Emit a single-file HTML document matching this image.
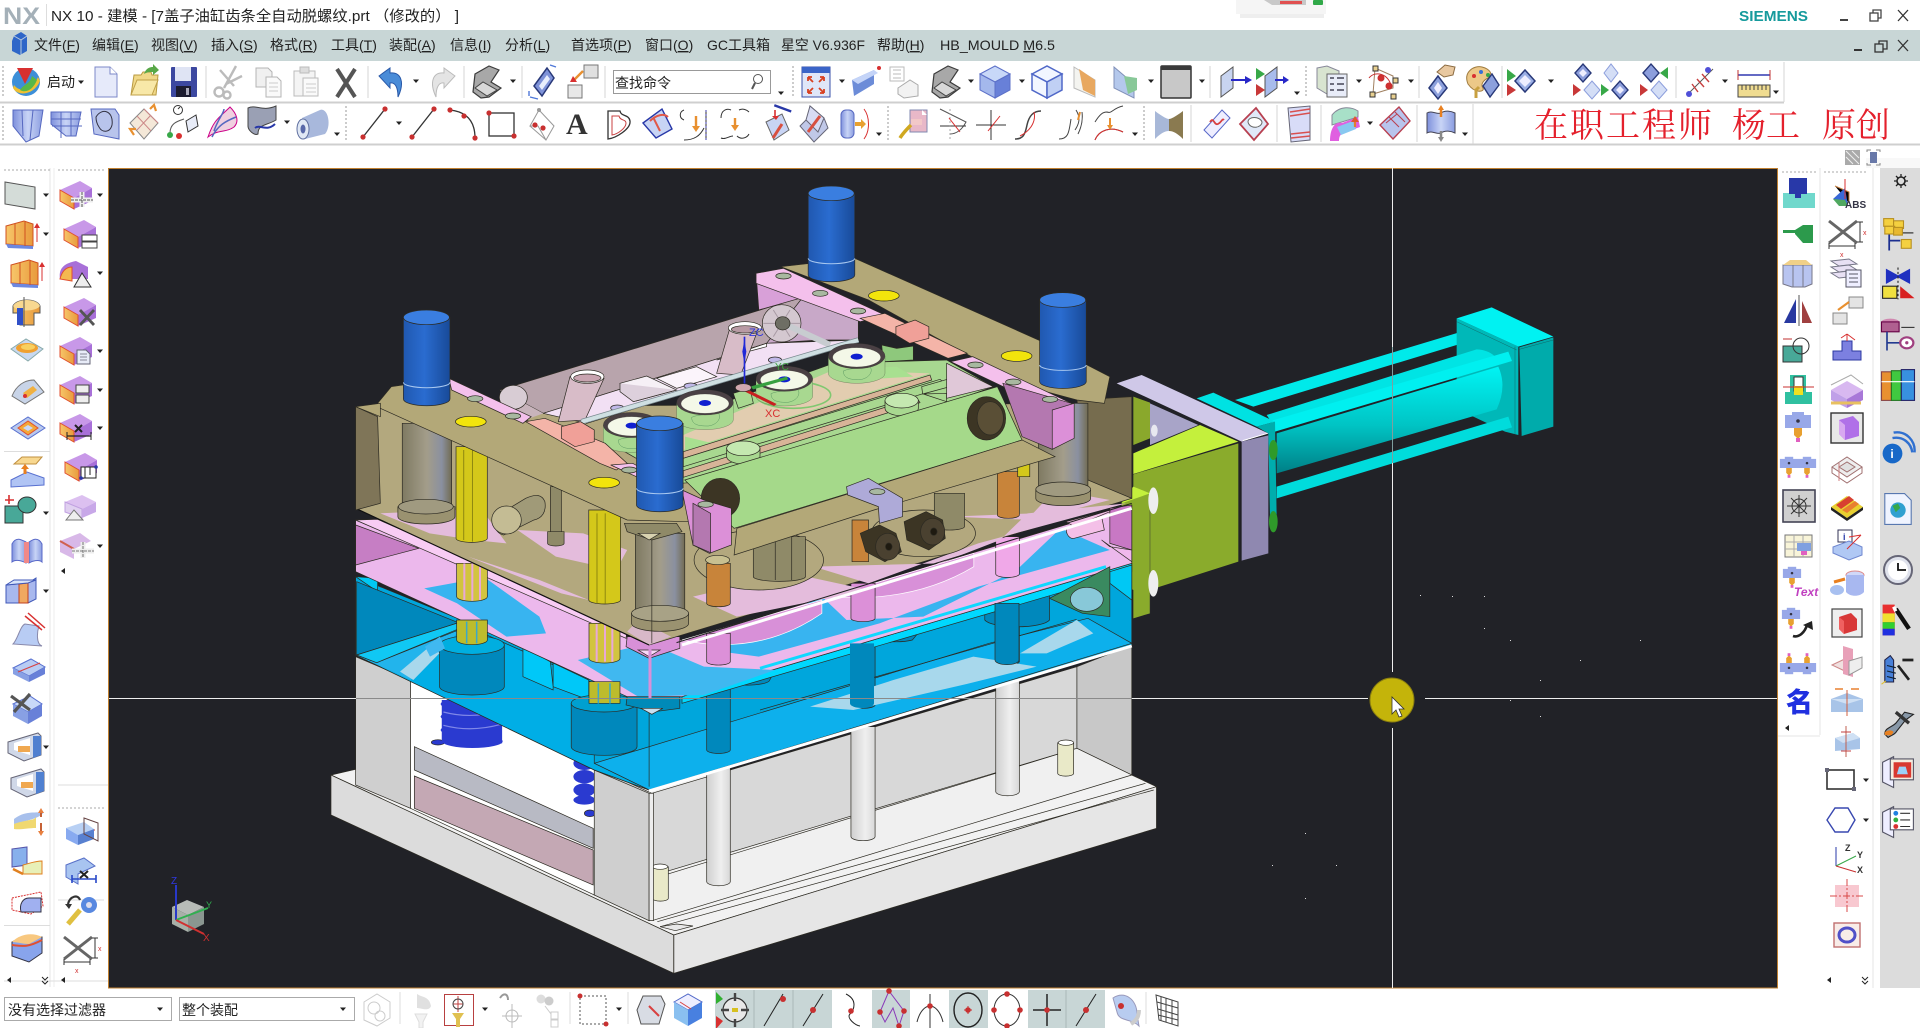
<!DOCTYPE html>
<html><head><meta charset="utf-8"><title>NX 10</title>
<style>
html,body{margin:0;padding:0;background:#fff;overflow:hidden}
svg{display:block}
text{font-family:"Liberation Sans","Noto Sans CJK SC",sans-serif;fill:#222}
.o *{vector-effect:non-scaling-stroke;stroke:#2c2a22;stroke-width:.7}
.n *{stroke:none}
.sep{stroke:#d4d4d4;stroke-width:1}
</style></head><body>
<svg width="1920" height="1028" viewBox="0 0 1920 1028" xmlns="http://www.w3.org/2000/svg">
<defs>
<linearGradient id="gP" x1="0" x2="1" y1="0" y2="0"><stop offset="0" stop-color="#2058b0"/><stop offset=".45" stop-color="#2a6cd0"/><stop offset="1" stop-color="#184a98"/></linearGradient>
<linearGradient id="gC" x1="0" x2="0" y1="0" y2="1"><stop offset="0" stop-color="#00f4f4"/><stop offset=".55" stop-color="#00c4c4"/><stop offset="1" stop-color="#007f86"/></linearGradient>
<linearGradient id="gPin" x1="0" x2="1" y1="0" y2="0"><stop offset="0" stop-color="#cfcfcf"/><stop offset=".6" stop-color="#efefef"/><stop offset="1" stop-color="#d8d8d8"/></linearGradient>
<linearGradient id="gCol" x1="0" x2="1" y1="0" y2="0"><stop offset="0" stop-color="#7f7a62"/><stop offset=".5" stop-color="#a39d8a"/><stop offset=".8" stop-color="#8a90a0"/><stop offset="1" stop-color="#726c52"/></linearGradient>
<linearGradient id="gOr" x1="0" x2="1" y1="0" y2="0"><stop offset="0" stop-color="#f7c66a"/><stop offset="1" stop-color="#e89a3c"/></linearGradient>
<linearGradient id="gBl" x1="0" x2="1" y1="0" y2="1"><stop offset="0" stop-color="#dfe8fc"/><stop offset="1" stop-color="#6f86dc"/></linearGradient>
<linearGradient id="gSurf" x1="0" x2="1" y1="0" y2="0"><stop offset="0" stop-color="#7e90dc"/><stop offset=".5" stop-color="#c8d4f6"/><stop offset="1" stop-color="#8a9ce0"/></linearGradient>

<path id="dd" d="M-3,-1.5h6l-3,3.5z" fill="#222"/>
<path id="tri" d="M2,-3v6l-4,-3z" fill="#222"/>

<!-- toolbar -->
<g id="start"><circle r="14" cx="-1" fill="#3d8fd8"/><path d="M-13,3c6,8 18,6 24,-8l2,4c-6,14 -22,16 -27,7z" fill="#f0c030"/><path d="M-10,-14h16l-8,16z" fill="#d83030"/><path d="M-7,8c4,-6 10,-6 12,-14l5,4c-3,8 -10,14 -17,10z" fill="#58b848"/></g>
<g id="doc"><path d="M-11,-15h15l7,7v23h-22z" fill="#e6eafa" stroke="#7c88c8"/><path d="M4,-15v7h7" fill="#fff" stroke="#7c88c8"/></g>
<g id="fold"><path d="M-13,13l3,-20h7l2,-3h8l1,3h6l-2,20z" fill="#f0d888" stroke="#b89a40"/><path d="M-13,13l6,-15h21l-6,15z" fill="#f8e8a8" stroke="#c0a048"/><path d="M0,-8c2,-6 6,-7 9,-7v-3l6,6l-6,5v-3c-3,0 -6,0 -9,2z" fill="#58a848"/></g>
<g id="flop"><rect x="-13" y="-15" width="26" height="30" rx="1" fill="#3c48a0"/><rect x="-9" y="-15" width="16" height="14" fill="#dfe4f4"/><rect x="-8" y="4" width="15" height="11" fill="#1c1c30"/><rect x="2" y="6" width="3" height="7" fill="#aab"/></g>
<g id="sc" fill="none" stroke="#bbb" stroke-width="2.4"><path d="M8,-16L-4,6M-8,-12L6,4M14,-6L-2,2"/><circle cx="-9" cy="10" r="4.5"/><circle cx="-1" cy="13" r="3.5"/></g>
<g id="cp" fill="#f0f0f0" stroke="#b4b4b4"><path d="M-12,-14h12l4,4v15h-16z"/><path d="M-2,-5h11l4,4v16h-15z" fill="#fafafa"/><path d="M1,1h9M1,5h9M1,9h9" stroke="#ccc"/></g>
<g id="pt" fill="#f4f4f4" stroke="#bbb"><rect x="-13" y="-11" width="21" height="25"/><rect x="-7" y="-15" width="9" height="6" fill="#ddd"/><path d="M-4,-4h15v18h-15z" fill="#fafafa"/><path d="M-1,2h10M-1,6h10M-1,10h10" stroke="#ccc"/></g>
<path id="xx" d="M-9,-14L9,14M9,-14L-9,14" stroke="#555" stroke-width="4"/>
<g id="undo"><path d="M-13,-6L-2,-14v5c11,-1 15,9 8,24c0,-10 -3,-15 -8,-14v5z" fill="#4a8cd8" stroke="#2858a8"/></g>
<g id="redo"><path d="M13,-6L2,-14v5c-11,-1 -15,9 -8,24c0,-10 3,-15 8,-14v5z" fill="#e4e4e4" stroke="#bbb"/></g>
<g id="wed"><path d="M-14,10L-12,-8L2,-16L12,-12L4,0L14,6L2,15L-6,16z" fill="#a8a8a8" stroke="#3c3c3c" stroke-width="1.2"/><path d="M-12,6L-4,0L10,8L0,14z" fill="#d8d8d8" stroke="#444"/></g>
<g id="dia"><path d="M-10,4L3,-14L10,-4L-2,14z" fill="#7e92d8" stroke="#283878" stroke-width="1.5"/><path d="M-5,4L3,-7L6,-3L-2,8z" fill="#e8eefc"/><path d="M-14,15l8,2M12,-15l-6,-2M-15,9v5" stroke="#4f78d8" stroke-width="1.4"/></g>
<g id="win2"><rect x="2" y="-17" width="14" height="13" fill="#e0e0e0" stroke="#777"/><rect x="-14" y="3" width="14" height="13" fill="#e8e8e8" stroke="#777"/><path d="M-9,-1L1,-11" stroke="#e89030" stroke-width="2.4"/><path d="M-12,0l7,0l-4,-6z" fill="#d83030"/></g>
<g id="fit"><rect x="-14" y="-15" width="28" height="30" fill="#dfe6f8" stroke="#3850a8"/><rect x="-14" y="-15" width="28" height="6" fill="#3a64c8"/><path d="M-8,-5l5,5M-8,-5h4M-8,-5v4M8,-5l-5,5M8,-5h-4M8,-5v4M-8,11l5,-5M-8,11h4M-8,11v-4M8,11l-5,-5M8,11h-4M8,11v-4" stroke="#d84020" stroke-width="1.8" fill="none"/></g>
<g id="ext"><path d="M-14,-2L8,-12v14L-12,14z" fill="#6c8cd8"/><path d="M-14,-2L8,-12l4,3L-8,2z" fill="#c4d4f8"/><circle cx="13" cy="-14" r="2" fill="#d83030"/></g>
<g id="lsb"><rect x="-14" y="-15" width="14" height="14" fill="#fff" stroke="#bbb"/><path d="M-11,-12h8M-11,-8h8M-11,-4h8" stroke="#bbb"/><path d="M-6,6L6,-2L14,3v11L0,16L-6,12z" fill="#f2f2f2" stroke="#aaa"/></g>
<g id="box"><path d="M-15,-8L0,-16L15,-8L0,0z" fill="#c8d8f8" stroke="#5c70c8"/><path d="M-15,-8L0,0V16L-15,8z" fill="#a4b8ec" stroke="#5c70c8"/><path d="M15,-8L0,0V16L15,8z" fill="#6880d8" stroke="#5c70c8"/></g>
<g id="wire" fill="#f2f6ff" stroke="#5068c8" stroke-width="1.5"><path d="M-15,-8L0,-16L15,-8L0,0z"/><path d="M-15,-8L0,0V16L-15,8z"/><path d="M15,-8L0,0V16L15,8z" fill="#c0d0f4"/></g>
<g id="ora"><path d="M-11,-15L10,-2V15L-11,6z" fill="#f4f4f0" stroke="#bbb"/><path d="M-6,-13L10,-2V14L-2,8z" fill="#e8a860"/></g>
<g id="grn"><path d="M-10,-15L10,2V16L-10,6z" fill="#b4c8ec" stroke="#8090b8"/><path d="M0,-6L13,-4V8L4,12z" fill="#88c898"/></g>
<g id="dkr"><rect x="-15" y="-16" width="30" height="32" rx="1" fill="#c8c8c8" stroke="#333" stroke-width="1.5"/><rect x="-15" y="-16" width="30" height="4" fill="#3a3a3a"/></g>
<g id="mov"><path d="M-14,-6L-2,-15V6L-14,15z" fill="#c8d4f0" stroke="#555"/><path d="M-4,-2H11" stroke="#2828c8" stroke-width="2"/><path d="M10,-6l7,4l-7,4z" fill="#2828c8"/></g>
<g id="mov2"><path d="M-7,-6L5,-15V6L-7,15z" fill="#a8bcec" stroke="#555"/><path d="M-16,-14l9,6l-9,6z" fill="#38a848"/><path d="M-16,2l9,6l-9,6z" fill="#c83838"/><path d="M3,-2H12" stroke="#2828c8" stroke-width="2"/><path d="M11,-6l6,4l-6,4z" fill="#2828c8"/></g>
<g id="lst"><path d="M-16,-14l10,-2l12,5v24l-12,-1l-10,-6z" fill="#d8e4d0" stroke="#889"/><rect x="-6" y="-8" width="20" height="23" fill="#e8ecf8" stroke="#666"/><path d="M-3,-4h4M4,-4h7M-3,2h4M4,2h7M-3,8h4M4,8h7" stroke="#445" stroke-width="1.4"/></g>
<g id="net" fill="none" stroke="#c83030"><path d="M-8,-14L-10,12L10,6L10,-6z" stroke="#a08060"/><circle cx="-2" cy="-4" r="3" fill="#d03030"/><circle cx="6" cy="4" r="3" fill="#d03030"/><path d="M-14,-4c6,-8 20,-4 22,8"/><rect x="-10" y="-16" width="5" height="5" fill="#e8d090" stroke="#333"/><rect x="10" y="-4" width="5" height="5" fill="#e8d090" stroke="#333"/><rect x="-13" y="10" width="5" height="5" fill="#e8d090" stroke="#333"/><rect x="8" y="12" width="5" height="5" fill="#e8d090" stroke="#333"/></g>
<g id="hand"><path d="M-4,-10l8,-7l10,2l-2,8l-9,2z" fill="#e8c8a0" stroke="#8a6a40"/><path d="M-12,6L-3,-6L6,6L-3,17z" fill="#8ca0dc" stroke="#283878" stroke-width="1.5"/><path d="M-7,6L-3,0L1,6L-3,12z" fill="#eef"/></g>
<g id="pal"><path d="M-12,2c-5,-12 6,-19 14,-17c8,2 12,8 6,11c-4,2 -8,6 -5,10c2,4 -8,6 -15,-4z" fill="#ecc888" stroke="#a07c40"/><circle cx="-6" cy="-6" r="2" fill="#d83030"/><circle cx="1" cy="-10" r="2" fill="#3870d8"/><circle cx="8" cy="-7" r="2" fill="#38a848"/><path d="M3,4L12,-8L19,3L10,15z" fill="#8ca0dc" stroke="#283878" stroke-width="1.4"/><path d="M-4,16v-8l3,-3" stroke="#c8a040" stroke-width="3" fill="none"/></g>
<g id="d1"><path d="M-8,0L2,-11L12,0L2,11z" fill="#9aaee4" stroke="#283878" stroke-width="1.5"/><path d="M-4,0L2,-6L8,0L2,6z" fill="#eef"/><path d="M-16,-12l9,7l-9,6z" fill="#38a848"/><path d="M-16,3l9,6l-9,6z" fill="#c83838"/></g>
<g id="d2"><path d="M-10,-9L-2,-18L6,-9L-2,0z" fill="#8c9edc" stroke="#283878" stroke-width="1.4"/><path d="M-6,-9L-2,-13L2,-9L-2,-5z" fill="#eef"/><path d="M-1,8L7,-1L15,8L7,17z" fill="#d4def6" stroke="#8c9edc"/><path d="M-12,2l8,6l-8,6z" fill="#c83838"/></g>
<g id="d3"><path d="M-9,-9L-2,-18L5,-9L-2,0z" fill="#d4def6" stroke="#8c9edc"/><path d="M-1,8L7,-1L15,8L7,17z" fill="#8c9edc" stroke="#283878" stroke-width="1.4"/><path d="M3,8L7,4L11,8L7,12z" fill="#eef"/><path d="M-12,2l8,6l-8,6z" fill="#38a848"/></g>
<g id="d4"><path d="M-11,-9L-3,-18L5,-9L-3,0z" fill="#8c9edc" stroke="#283878" stroke-width="1.4"/><path d="M-3,8L5,-1L13,8L5,17z" fill="#d4def6" stroke="#8c9edc"/><path d="M14,-15l-8,6l8,6z" fill="#38a848"/><path d="M-14,2l8,6l-8,6z" fill="#c83838"/></g>
<g id="chain"><path d="M-13,13L13,-13" stroke="#555"/><path d="M-8,2L-2,10M-3,-3L4,5M2,-8L9,0" stroke="#c84040" stroke-width="1.4"/><circle cx="-11" cy="12" r="3" fill="#5050d8"/><circle cx="8" cy="-12" r="3" fill="#5050d8"/></g>
<g id="rul"><path d="M-16,-9h32" stroke="#3038b0" stroke-width="1.5"/><path d="M-16,-14v10M16,-14v10" stroke="#c03030"/><rect x="-16" y="1" width="32" height="12" fill="#f0dc90" stroke="#444"/><path d="M-12,1v5M-8,1v5M-4,1v5M0,1v5M4,1v5M8,1v5M12,1v5" stroke="#444"/></g>

<!-- row 2 surfaces -->
<g id="s1"><path d="M-15,-12h30l-4,26l-13,6L-15,4z" fill="url(#gSurf)" stroke="#5668c0"/><path d="M-6,-12l1,26M5,-12l-3,30" stroke="#5668c0"/></g>
<g id="s2"><path d="M-15,-10h30l-5,24h-10L-15,2z" fill="url(#gSurf)" stroke="#5668c0"/><path d="M-5,-10v26M5,-10v24M-15,-3h30M-14,4h30" stroke="#5668c0"/></g>
<g id="s3"><path d="M-14,-14l24,0l4,6v24L-11,11z" fill="#b8c4ec" stroke="#5668c0"/><path d="M-9,-6c6,-10 18,-6 16,8c-2,8 -10,8 -13,2c-2,-3 -3,-6 -3,-10z" fill="none" stroke="#334"/></g>
<g id="s4"><path d="M-14,0L0,-14L14,0L0,16z" fill="#f4e8d8" stroke="#888"/><path d="M-7,-7L7,8M0,-14L14,0M-7,7L7,-8" stroke="#c88"/><path d="M-10,12l-4,-6h6M6,-14l4,-4l2,6" stroke="#e89030" stroke-width="2.2" fill="none"/></g>
<g id="s5"><circle cx="-4" cy="-13" r="4.5" fill="#fff" stroke="#333"/><path d="M-4,-14l2,-2" stroke="#333"/><path d="M-12,10c0,-10 8,-12 14,-14" fill="none" stroke="#555"/><path d="M4,-2L14,-8L16,3L6,9z" fill="#e8ecf8" stroke="#333"/><circle cx="-12" cy="12" r="3" fill="#38a848"/><circle cx="-3" cy="13" r="3" fill="#d83030"/></g>
<g id="s6"><path d="M-14,14C-8,-4 -2,-6 8,-16c6,6 10,14 4,20C4,10 -4,6 -14,14z" fill="#f0d0e0" stroke="#c08"/><path d="M-10,14C-4,2 4,-2 14,-6M-8,8C-4,-4 2,-10 2,-14" fill="none" stroke="#5668c0" stroke-width="1.5"/></g>
<g id="s7"><path d="M-15,-14c8,-4 14,4 28,-2v14c-10,6 -18,4 -18,14c-4,2 -10,-4 -10,-8z" fill="#9aa0b4" stroke="#444"/><path d="M-8,6c5,-4 12,4 20,-4" fill="none" stroke="#2838a8" stroke-width="2"/></g>
<g id="tube"><path d="M-10,-6L8,-14a7,13 0 0 1 5,24L-7,15z" fill="#a8b8dc"/><ellipse cx="-9" cy="5" rx="6" ry="10" fill="#e0e8f4" stroke="#6070a0"/><ellipse cx="-9" cy="5" rx="2.5" ry="4.5" fill="#5868a8"/></g>
<g id="ln"><path d="M-12,13L10,-15" stroke="#333" stroke-width="1.3"/><circle cx="-12" cy="13" r="2.6" fill="#c83030"/><circle cx="10" cy="-15" r="2.6" fill="#c83030"/></g>
<g id="arc"><path d="M-13,-14C6,-12 12,0 12,14" stroke="#333" stroke-width="1.3" fill="none"/><circle cx="-13" cy="-14" r="2.6" fill="#c83030"/><circle cx="1" cy="-8" r="2.6" fill="#c83030"/><circle cx="12" cy="14" r="2.6" fill="#c83030"/></g>
<g id="rct"><rect x="-13" y="-11" width="25" height="23" fill="none" stroke="#333" stroke-width="1.3"/><circle cx="-13" cy="-11" r="2.6" fill="#c83030"/><circle cx="12" cy="12" r="2.6" fill="#c83030"/></g>
<g id="pts"><path d="M-3,-14L-12,2L-4,2L4,16L12,2L-3,-14M-12,2L4,16" stroke="#999" fill="none"/><circle cx="-3" cy="-14" r="2" fill="#999"/><circle cx="-7" cy="1" r="2.6" fill="#c83030"/><circle cx="1" cy="4" r="2.6" fill="#c83030"/></g>
<g id="shp"><path d="M-10,-13h12c1,6 9,3 10,10c1,8 -14,17 -22,18z" fill="#fff" stroke="#333" stroke-width="1.3"/><path d="M-6,-8h7c1,5 7,3 7,7c0,5 -8,11 -14,12z" fill="none" stroke="#c84040"/></g>
<g id="off"><path d="M-15,0L4,-14L14,6L-2,15z" fill="#c8d4f4" stroke="#2838a8" stroke-width="1.4"/><path d="M-8,-2C-2,-8 6,-10 10,-6M-4,-4l6,12" stroke="#e05848" stroke-width="2" fill="none"/></g>
<g id="cr1"><path d="M-12,-14c-5,2 -5,8 0,10M-12,16c10,0 16,-4 20,-12M10,-14v30" fill="none" stroke="#333"/><path d="M10,-14v30" stroke="#3838a8" stroke-dasharray="2 2"/><path d="M0,-8v10" stroke="#e89030" stroke-width="2.4"/><path d="M-4,2h8l-4,6z" fill="#e89030"/></g>
<g id="cr2"><path d="M-14,-6c0,-8 6,-10 10,-8M4,-14c4,-2 8,0 10,2M-14,14c4,2 8,-2 12,-2M2,12c4,4 10,2 12,-2" fill="none" stroke="#333"/><path d="M0,-6v8" stroke="#e89030" stroke-width="2.4"/><path d="M-4,1h8l-4,6z" fill="#e89030"/></g>
<g id="prj"><path d="M-10,-2L6,-10L13,6L-2,16z" fill="#c8d4f4" stroke="#666"/><path d="M-8,-17h18" stroke="#2838a8" stroke-width="2.4" transform="rotate(20)"/><path d="M-1,-14v6" stroke="#d83030" stroke-width="1.6"/><path d="M-4,-8h7l-3,4z" fill="#d83030"/><path d="M-3,14L6,0" stroke="#d85040" stroke-width="3"/></g>
<g id="prj2"><path d="M-4,-18L10,-6L14,4L0,18L-14,2L-6,-6z" fill="#c0c8e8" stroke="#667"/><path d="M-4,-18L10,-6L4,8L-8,-4z" fill="#d8dcf4" stroke="#667"/><path d="M-6,8L6,-8" stroke="#d85040" stroke-width="3"/></g>
<g id="ext2"><rect x="-13" y="-14" width="13" height="28" rx="5" fill="url(#gSurf)" stroke="#5668c0"/><path d="M10,-15c6,8 6,22 0,30" fill="none" stroke="#d83030"/><path d="M1,-2h6v-3l5,5l-5,5v-3h-6z" fill="#e8a030"/></g>
<g id="key"><rect x="-4" y="-14" width="17" height="22" fill="#e8b8c8" stroke="#8088b0"/><path d="M8,-14l5,5h-5z" fill="#fff"/><rect x="-3" y="-5" width="11" height="6" fill="#f2c8c8"/><path d="M-14,14c3,-5 7,-9 11,-13" stroke="#d0a820" stroke-width="3.5"/></g>
<g id="trm"><path d="M-12,-15L14,-2c-4,8 -10,12 -16,12" stroke="#555" fill="none"/><path d="M-12,2H14" stroke="#333"/><path d="M-2,-15v30" stroke="#aaa" stroke-dasharray="2 2"/><path d="M-3,-6L8,8" stroke="#d83030"/></g>
<g id="trm2"><path d="M-15,1h30M0,-14v30" stroke="#333"/><path d="M-3,7L9,-8" stroke="#d83030"/></g>
<g id="s_c"><path d="M-15,15c8,0 10,-4 12,-14c2,-9 6,-14 14,-14" fill="none" stroke="#444" stroke-width="1.5"/><path d="M-10,12C2,6 6,-4 4,-12" stroke="#d83030" fill="none"/></g>
<g id="s_d"><path d="M-14,15c10,0 10,-8 12,-20M3,-14c5,8 3,14 -1,20M9,-12c1,8 -1,16 -4,22" fill="none" stroke="#444"/><path d="M7,-12l-2,8" stroke="#e89030" stroke-width="2"/></g>
<g id="s_e"><path d="M-15,-2c5,-8 8,-10 12,-10c5,2 6,-4 16,-6M-15,16c4,-10 16,-14 28,-8" fill="none" stroke="#444"/><path d="M-15,16c4,-10 16,-14 28,-8" fill="none" stroke="#d83030"/><path d="M0,-6v8" stroke="#e89030" stroke-width="2"/><path d="M-3,1h6l-3,5z" fill="#e89030"/></g>
<g id="bow"><path d="M-14,-12c8,6 12,8 14,8l0,12c-4,0 -8,2 -14,8z" fill="#a8b8d8"/><path d="M14,-12c-8,6 -12,8 -14,8v12c4,0 8,2 14,8z" fill="#8a7a50"/></g>
<g id="wave"><path d="M-12,6L6,-14L14,-6L-4,14z" fill="#eef" stroke="#5868c8"/><path d="M-6,-2c4,-6 4,4 8,2s4,-6 6,-4" fill="none" stroke="#d84040" stroke-width="1.8"/></g>
<g id="sq"><path d="M-14,0L2,-16L14,0L0,16z" fill="#e0e8f8" stroke="#b84050" stroke-width="1.8"/><path d="M-6,-2c0,-6 12,-6 14,0c0,6 -12,8 -14,0z" fill="#fff" stroke="#666"/></g>
<g id="fold3"><path d="M-11,-16L11,-18V16L-8,18z" fill="#d8dcf8" stroke="#667"/><path d="M-9,-12L11,-15M-9,-8L11,-11M-8,10L11,8M-8,14L11,12" stroke="#d85050" stroke-width="1.6"/></g>
<g id="rb"><path d="M-13,-8c8,-10 20,-8 26,-4v6L-13,2z" fill="#a8e0c8" stroke="#889"/><path d="M-15,18c0,-14 6,-20 12,-18l16,-6l2,10L-2,10c-4,2 -4,6 -4,8z" fill="#e060e0"/><path d="M-8,4L8,-2l3,8L-4,12z" fill="#88c8f0"/><path d="M10,4v-6" stroke="#e08030" stroke-width="2.2"/><path d="M6,-1h8l-4,-6z" fill="#e05830"/></g>
<g id="sq2"><path d="M-15,2L4,-16L15,-2L-2,16z" fill="#b8c4ec" stroke="#b84050" stroke-width="1.4"/><path d="M-6,-6L4,4M0,-11L10,-1M-9,0l11,-9" stroke="#b84050"/></g>
<g id="twin"><path d="M-14,-10c5,-3 10,2 14,0c4,-3 10,-2 14,0v20c-4,-2 -10,-3 -14,0c-4,2 -9,-3 -14,0z" fill="url(#gSurf)" stroke="#445"/><path d="M0,-6v-8" stroke="#e88020" stroke-width="2.5"/><path d="M-3,-13h6l-3,-5z" fill="#e88020"/><path d="M0,8v8" stroke="#888" stroke-width="2.5"/><path d="M-3,14h6l-3,5z" fill="#888"/></g>

<!-- bottom -->
<g id="b_wr" fill="none" stroke="#ccc"><path d="M-13,10V-8L0,-16L13,-8V8L0,16z"/><circle cx="-3" cy="-2" r="6"/><circle cx="3" cy="6" r="5"/></g>
<g id="b_fn"><path d="M-6,-16c6,4 12,2 14,12c-2,6 -10,2 -14,2" fill="#e0e0e0"/><path d="M-8,4h12l-4,8v6h-4v-6z" fill="#f2f2f2" stroke="#ddd"/></g>
<g id="b_fy"><path d="M-5,-6h10M0,-14V2" stroke="#c04040"/><circle cy="-6" r="5" fill="none" stroke="#444"/><path d="M-6,3h12l-4,6v8h-4v-8z" fill="#e0c050"/></g>
<g id="b_cr" fill="none" stroke="#bbb"><circle cx="2" cy="6" r="6"/><path d="M-8,6h20M2,-6v24"/><path d="M-10,-12c4,-6 8,-4 8,2" stroke="#999" stroke-width="2"/></g>
<g id="b_bn"><circle cx="-6" cy="-11" r="4.5" fill="#ddd"/><circle cx="2" cy="-9" r="4.5" fill="#ccc"/><rect x="4" y="2" width="7" height="7" fill="none" stroke="#ccc"/><rect x="4" y="10" width="7" height="7" fill="none" stroke="#ccc"/><path d="M-2,-4L4,4" stroke="#ccc"/></g>
<g id="b_ds"><rect x="-13" y="-14" width="26" height="28" fill="none" stroke="#555" stroke-dasharray="2 2"/><circle cx="-13" cy="-14" r="2.5" fill="#c83030"/><circle cx="13" cy="14" r="2.5" fill="#c83030"/></g>
<g id="b_sel"><path d="M-14,0L-8,-14L10,-14L14,-6L8,14L-10,14z" fill="#d8dce4" stroke="#555"/><path d="M-2,-4L8,6" stroke="#d84040" stroke-width="2"/></g>
<g id="b_boxb"><path d="M-14,-8L0,-16L14,-8L0,0z" fill="#eef" stroke="#5068c8"/><path d="M-14,-8L0,0V16L-14,8z" fill="#8ac0f0"/><path d="M14,-8L0,0V16L14,8z" fill="#4880e0"/><path d="M-8,-8L3,-1" stroke="#d84040"/></g>
<g id="b_all"><circle r="12" fill="#e8e8e8" stroke="#333" stroke-width="1.2"/><path d="M0,-2v4" stroke="#d8c020" stroke-width="6"/><path d="M0,-17v8M0,9v8M-14,0h8M6,0h8" stroke="#444" stroke-width="2.4"/><path d="M-19,-18l7,7l-7,5z" fill="#30b030"/><path d="M-19,6l7,5l-7,8z" fill="#d83030"/></g>
<g id="b_ln"><path d="M-10,16L9,-16" stroke="#222"/><circle cx="9" cy="-11" r="3" fill="#c83030"/></g>
<g id="b_lm"><path d="M-10,16L10,-16" stroke="#222"/><circle cy="0" r="3" fill="#c83030"/></g>
<g id="b_cur"><path d="M-6,-16C6,-10 2,0 -2,4S4,16 8,16" fill="none" stroke="#222"/><circle cx="-1" cy="1" r="2.8" fill="#c83030"/></g>
<g id="b_ctl"><path d="M-2,-17L-11,4L-6,14L2,0L8,18L13,3L-2,-17" fill="none" stroke="#8a3ab8"/><circle cx="-2" cy="-17" r="2.8" fill="#c83030"/><circle cx="-11" cy="4" r="2.8" fill="#c83030"/><circle cx="8" cy="18" r="2.8" fill="#c83030"/><circle cx="13" cy="3" r="2.8" fill="#c83030"/></g>
<g id="b_int"><path d="M-13,12C-10,0 -4,-4 0,-4S10,0 13,12M0,-16V18" fill="none" stroke="#333"/><circle cy="-4" r="2.8" fill="#c83030"/></g>
<g id="b_cir"><ellipse rx="14" ry="17" fill="none" stroke="#222" stroke-width="1.4"/><circle r="2.8" fill="#c83030"/><path d="M-4,0h8M0,-4v8" stroke="#c83030"/></g>
<g id="b_q"><ellipse rx="13" ry="16" fill="none" stroke="#333"/><circle cy="-16" r="2.8" fill="#c83030"/><circle cy="16" r="2.8" fill="#c83030"/><circle cx="-13" r="2.8" fill="#c83030"/><circle cx="13" r="2.8" fill="#c83030"/></g>
<g id="b_pl"><path d="M-14,0h28M0,-16v32" stroke="#222" stroke-width="1.5"/><circle r="2.8" fill="#c83030"/></g>
<g id="b_sf"><path d="M-12,-12C0,-20 12,-10 12,4L14,16C6,8 -6,12 -8,2z" fill="#b8ccf0" stroke="#99b"/><circle cx="-4" cy="-4" r="3" fill="#c83030"/><path d="M6,14c6,-4 8,-8 8,-14" stroke="#ccc" stroke-width="4" fill="none"/></g>
<g id="b_grd" fill="none" stroke="#444"><path d="M-11,-15L11,-8V16L-8,10z"/><path d="M-6,-13.5V11M-1,-12V12.5M5,-10V14M-10,-8L11,-2M-9,-1L11,5M-9,5L11,10"/></g>

<!-- left col1 -->
<g id="l1"><path d="M-16,-13L14,-8V14L-16,9z" fill="#d4dcd8" stroke="#555"/></g>
<g id="l2"><path d="M-14,-8L4,-13L13,-10V12L-14,10z" fill="url(#gOr)" stroke="#d05020"/><path d="M-14,10L13,12L13,15L-12,14z" fill="#6c88e0"/><path d="M-5,-10V11M5,-12V12" stroke="#d05020"/><path d="M17,-8V8" stroke="#d83030"/><path d="M14,-6l3,-5l3,5z" fill="#d83030"/></g>
<g id="l4"><path d="M-13,-6c4,-8 24,-8 27,0v7h-6v12h-14v-12h-7z" fill="url(#gOr)" stroke="#555"/><path d="M-13,-6c4,-8 24,-8 27,0c-4,6 -24,6 -27,0z" fill="#f8d890"/><path d="M-2,-15V15" stroke="#555"/><rect x="-9" y="-4" width="6" height="17" fill="#3050c8"/></g>
<g id="l5"><path d="M-15,0L0,-10L17,0L2,12z" fill="#c8d8f0" stroke="#8aa"/><ellipse cx="1" cy="-1" rx="11" ry="5" fill="#f0a030"/><ellipse cx="2" cy="-2" rx="7" ry="3" fill="#f8d060"/></g>
<g id="l6"><path d="M-15,6c4,-10 12,-16 22,-16l10,12L-2,14z" fill="#c8d4e8" stroke="#777"/><path d="M-4,3L6,-4L10,0L0,8z" fill="#f0b040"/><circle cx="-2" cy="6" r="2" fill="#d83030"/></g>
<g id="l7"><path d="M-16,0L1,-11L18,0L1,11z" fill="#b8c8ee" stroke="#5870d0"/><path d="M-9,0L1,-7L11,0L1,7z" fill="#f4a838" stroke="#e05030"/><path d="M-4,0L1,-3L6,0L1,3z" fill="#c8d8f8"/></g>
<g id="l8"><path d="M-5,-17h20l-6,7h-22z" fill="#f8d890" stroke="#c09040"/><path d="M-16,6L0,-2L17,4V11L-16,13z" fill="#b0c4f4" stroke="#5870d0"/><path d="M-2,0V-6" stroke="#e88020" stroke-width="3"/><path d="M-6,-5h8l-4,-5z" fill="#e88020"/></g>
<g id="l9"><path d="M-14,-17v9M-18,-12h9" stroke="#d83030" stroke-width="1.6"/><rect x="-18" y="-6" width="18" height="17" fill="#48a898" stroke="#333"/><ellipse cx="4" cy="-7" rx="9" ry="8" fill="#48a898" stroke="#333"/></g>
<g id="l10"><path d="M-15,-7c4,-8 10,-4 14,-2V12c-4,-2 -10,-4 -14,-1z" fill="url(#gSurf)" stroke="#5868c8"/><path d="M15,-7c-4,-8 -10,-4 -13,-2V12c3,-2 10,-4 13,-1z" fill="url(#gSurf)" stroke="#5868c8"/><rect x="-3" y="-9" width="5" height="21" fill="#f08888"/></g>
<g id="l11"><path d="M-14,-6L8,-8l8,-5V8L8,12L-14,12z" fill="#a8b8ee" stroke="#4058b8"/><path d="M-1,-7L8,-8V12H-1z" fill="#f0a860" stroke="#c04020"/><path d="M-14,-6L-6,-11H16L8,-8z" fill="#d8e4fb" stroke="#4058b8"/></g>
<g id="l12"><path d="M-14,14c5,-5 7,-18 12,-20l14,2c-2,6 -3,18 3,20z" fill="#b8ccf4" stroke="#88a"/><path d="M-2,-14L15,0M1,-17L18,-2" stroke="#d83030" stroke-width="1.5"/></g>
<g id="l13"><path d="M-14,0L4,-9L18,-1L2,8z" fill="#b8ccf4" stroke="#5870d0"/><path d="M-14,0L2,8V14L-14,6z" fill="#88a0e4"/><path d="M18,-1L2,8V14L18,6z" fill="#6880d8"/><path d="M-9,4L13,-5" stroke="#d84040" stroke-width="1.2"/></g>
<g id="l14"><path d="M-13,-4L4,-12L16,-4L2,4z" fill="#c8d8f8" stroke="#5870d0"/><path d="M-13,-4L2,4V16L-13,8z" fill="#88a0e4"/><path d="M16,-4L2,4V16L16,8z" fill="#6880d8"/><path d="M-15,-12L4,2M4,-14L-12,4" stroke="#555" stroke-width="3.2"/></g>
<g id="l15"><path d="M-16,-4L14,-13L17,-10V9L0,15L-16,7z" fill="#d0d8e8" stroke="#667"/><path d="M-10,-3L6,-8V9L-10,4z" fill="#fff"/><path d="M-6,0H6V6H-6z" fill="#f0a850"/><path d="M9,-10L17,-10V9L9,12z" fill="#5080d0"/></g>
<g id="l16"><path d="M-14,-4c10,-8 20,-6 30,-7c-4,6 -14,8 -30,12z" fill="#a8c0ec"/><path d="M-14,1C0,-4 6,-2 8,-6V5C0,5 -8,7 -14,6z" fill="#f0d870"/><path d="M13,-12v6M13,0v10" stroke="#c05020" stroke-width="1.8"/><path d="M10,-10l3,-5l3,5zM10,8l3,5l3,-5z" fill="#e88040"/></g>
<g id="l17"><path d="M-15,-14l15,-2V2L-15,4z" fill="#88b0ec" stroke="#55a"/><path d="M-4,2C4,0 8,-2 15,-2V11H-4z" fill="#e8f0b8" stroke="#e08020"/><path d="M-14,6l10,5" stroke="#e08020" stroke-width="2.4"/></g>
<g id="l18"><path d="M-15,-4L14,-10L16,4L4,12L-15,8z" fill="none" stroke="#d83030" stroke-dasharray="2 1"/><path d="M-6,10c-2,-8 2,-14 8,-14h12V10z" fill="#a0b0f0" stroke="#334"/></g>
<g id="l19"><path d="M-15,-6c6,-4 14,-4 30,-5v16L2,14L-15,8z" fill="#88a4ec" stroke="#334"/><path d="M-15,-6c8,-8 20,-10 30,-5L2,-4C-4,-4 -10,-6 -15,-6z" fill="#f8c880"/><path d="M-15,-3C-6,-2 0,0 15,-8" stroke="#e05030" stroke-width="2" fill="none"/></g>

<!-- col2 purple/orange -->
<g id="pb"><path d="M-16,-5L4,-14L16,-7L-2,3z" fill="#c898e8"/><path d="M16,-7L-2,3V14L16,6z" fill="#a870d8"/><path d="M-16,-5L-2,3V14L-16,6z" fill="url(#gOr)" stroke="#e05030"/></g>
<g id="p1"><use href="#pb"/><path d="M-5,5h22M6,-3v15" stroke="#eee" stroke-width="5"/><path d="M-5,5h22M6,-3v15" stroke="#555" stroke-width="1" stroke-dasharray="3 1"/></g>
<g id="p2"><use href="#pb"/><rect x="2" y="1" width="15" height="6" fill="#fff" stroke="#444"/><rect x="2" y="8" width="15" height="6" fill="#fff" stroke="#444"/></g>
<g id="p3"><path d="M-16,6c-2,-12 6,-16 16,-18l12,6V6z" fill="#a870d8"/><path d="M-16,6c2,-8 6,-12 12,-12V8z" fill="#f4b850" stroke="#e05030"/><path d="M-2,14L6,0L15,14z" fill="#eee" stroke="#333"/></g>
<g id="p4"><use href="#pb"/><path d="M0,-2L14,13M14,-2L0,13" stroke="#555" stroke-width="2.8"/></g>
<g id="p5"><use href="#pb"/><path d="M1,-1h9l4,4v10h-13z" fill="#e8ecf8" stroke="#667"/><path d="M4,3h7M4,6h7M4,9h7" stroke="#889"/></g>
<g id="p6"><use href="#pb"/><rect x="0" y="-5" width="13" height="8" fill="#eee" stroke="#444"/><rect x="0" y="5" width="13" height="8" fill="#eee" stroke="#444"/></g>
<g id="p7"><use href="#pb"/><path d="M-9,8h24" stroke="#222" stroke-width="1.3"/><path d="M-9,4v8M15,4v8" stroke="#222"/><path d="M-1,-3L6,4M6,-3L-1,4" stroke="#222" stroke-width="2"/></g>
<g id="p8"><use href="#pb"/><rect x="0" y="0" width="15" height="11" fill="#fff" stroke="#222"/><path d="M4,0v11M9,0v8" stroke="#222"/><circle cx="0" cy="11" r="1.8" fill="#2838a8"/><circle cx="15" cy="0" r="1.8" fill="#2838a8"/></g>
<g id="p9"><path d="M-15,-4L2,-11L16,-4L2,3z" fill="#dcc0f0"/><path d="M-15,-4L2,3V12L-15,6z" fill="#e0d0f0" stroke="#c0a0e0"/><path d="M16,-4L2,3V12L16,6z" fill="#c8a8e8"/><path d="M-14,14L-6,4L3,14z" fill="#eee" stroke="#777"/></g>
<g id="p10"><path d="M-16,-5L4,-13L15,-5L-2,3V13L-16,6z" fill="#d8b8e8"/><path d="M-16,-5L-2,3" stroke="#d06050" stroke-width="2"/><path d="M-4,5h22M7,-4v16" stroke="#eee" stroke-width="5"/><path d="M-4,5h22M7,-4v16" stroke="#555" stroke-width=".8" stroke-dasharray="3 1"/></g>
<g id="q1"><path d="M-14,-4L4,-10L14,-3L-2,3z" fill="#b8d0f4"/><path d="M-14,-4L-2,3V13L-14,7z" fill="#88aaf0"/><path d="M14,-3L-2,3V13L14,7z" fill="#5880d0"/><path d="M4,-14L18,-9V9L4,2z" fill="none" stroke="#644"/><path d="M14,-2h1" stroke="#c33"/></g>
<g id="q2"><path d="M-14,-6L4,-13L15,-5L-2,3V13L-14,6z" fill="#a8c4f0" stroke="#5870c8"/><path d="M-8,8H16M-8,4v8M16,4v8" stroke="#2848c8" stroke-width="1.6"/><path d="M0,0L8,7M8,0L0,7" stroke="#222" stroke-width="2"/></g>
<g id="q3"><path d="M-12,16L0,2" stroke="#e0c040" stroke-width="5"/><circle cx="9" cy="-3" r="8" fill="#5888e0"/><circle cx="9" cy="-3" r="3" fill="#dde"/><path d="M-12,-4c2,-8 10,-10 12,-4" stroke="#333" stroke-width="2.2" fill="none"/><path d="M-15,-4h7l-3,5z" fill="#333"/></g>
<g id="q4"><path d="M-16,-11L12,11M12,-11L-16,11" stroke="#666" stroke-width="3"/><path d="M15,-10v20M12,-10h6M12,10h6" stroke="#333"/><path d="M-16,14h26M-16,11v6M10,11v6" stroke="#333"/><text x="-5" y="25" font-size="7" style="fill:#d03030">x</text><text x="18" y="3" font-size="7" style="fill:#d03030">x</text></g>

<!-- right col A -->
<g id="a1"><rect x="-16" y="-2" width="32" height="15" fill="#70d8cc"/><path d="M-10,-17H8V-1H2V3H-4V-1H-10z" fill="#2838a8"/></g>
<g id="a2"><rect x="-16" y="-2" width="12" height="3" fill="#2c9a4c"/><path d="M-4,-2L4,-7H14V11H4L-4,2z" fill="#2c9a4c"/></g>
<g id="a3"><path d="M-15,-8H14V11L7,14H-6L-15,11z" fill="#b8c4f0" stroke="#778"/><path d="M-15,-8L-8,-13H8L14,-8z" fill="#f0d088"/><path d="M-5,-8V14M5,-8V14" stroke="#778"/></g>
<g id="a4"><path d="M-14,12L-2,-12V12z" fill="#2838a0"/><path d="M14,12L4,-10V12z" fill="#a04040"/><path d="M1,-16V15" stroke="#555"/></g>
<g id="a5"><path d="M-14,-11h9" stroke="#c03030"/><rect x="-14" y="-4" width="19" height="16" fill="#48a898" stroke="#333"/><circle cx="4" cy="-4" r="8" fill="none" stroke="#333"/></g>
<g id="a6"><path d="M-14,2h5V-15H7V2h6v12H-14z" fill="#30c0a0"/><rect x="-5" y="-13" width="9" height="14" fill="#fff" stroke="#333"/><rect x="-5" y="-4" width="9" height="9" fill="#f0e020"/><path d="M-16,-3H15" stroke="#c83030"/></g>
<g id="a7"><rect x="-13" y="-13" width="26" height="13" fill="#98a8e8"/><rect x="-6" y="-16" width="12" height="4" fill="#98a8e8"/><path d="M-4,0h8v7l-4,4l-4,-4z" fill="#e8a030"/><circle cy="-7" r="1.8" fill="#334"/><path d="M-2,10h4v4h-4z" fill="#e060c0"/></g>
<g id="a8"><g transform="translate(-9,0) scale(.7)"><use href="#a7"/></g><g transform="translate(9,0) scale(.7)"><use href="#a7"/></g></g>
<g id="a9"><rect x="-16" y="-16" width="32" height="32" fill="#d0d0d0" stroke="#445" stroke-width="1.6"/><g stroke="#333" fill="none"><circle r="7"/><path d="M-12,0H12M0,-11V11M-8,-8L8,8M8,-8L-8,8"/></g></g>
<g id="a10"><rect x="-13" y="-11" width="27" height="22" fill="#f8f4d8" stroke="#777"/><path d="M-13,-4H14M-13,3H14M-4,-11V11M5,-11V11" stroke="#aaa"/><rect x="-1" y="-3" width="14" height="8" fill="#80a0e0"/><path d="M3,5h6v4h-6z" fill="#e060c0"/></g>
<g id="a11"><g transform="translate(-6,-5) scale(.7)"><use href="#a7"/></g><text x="-4" y="13" font-size="12" font-style="italic" font-weight="700" style="fill:#c040c0">Text</text></g>
<g id="a12"><g transform="translate(-7,-4) scale(.7)"><use href="#a7"/></g><path d="M-5,13c6,2 12,-4 14,-11" stroke="#222" stroke-width="2.6" fill="none"/><path d="M5,2l9,-4l1,9z" fill="#222"/></g>
<g id="a13"><g transform="translate(-9,0) scale(.7,-.7)"><use href="#a7"/></g><g transform="translate(9,0) scale(.7,-.7)"><use href="#a7"/></g></g>
<g id="b1"><path d="M-12,-8L2,-2V9" stroke="#c88040" stroke-width="1"/><path d="M-14,5L-2,-6L1,12z" fill="#3868d8"/><path d="M-14,5L-8,12L1,12L-2,6z" fill="#50a860"/><path d="M-2,-15V5" stroke="#d83030"/><text x="-2" y="14" font-size="10" font-weight="700" style="fill:#334">ABS</text></g>
<g id="b3"><path d="M-16,-12L2,-14L10,-9L-8,-7z" fill="#e8e0f4" stroke="#778"/><path d="M-16,-6L2,-8L10,-3L-8,-1z" fill="#e8e0f4" stroke="#778"/><path d="M-16,0L2,-2L10,3L-8,5z" fill="#e8e0f4" stroke="#778"/><rect x="-1" y="-3" width="15" height="17" fill="#eef" stroke="#556"/><path d="M2,1h9M2,5h9M2,9h9" stroke="#556"/></g>
<g id="b4"><rect x="2" y="-14" width="14" height="11" fill="#e4e4e4" stroke="#888"/><rect x="-14" y="2" width="14" height="11" fill="#e4e4e4" stroke="#888"/><path d="M-9,-1L2,-9" stroke="#e89030" stroke-width="2.2"/></g>
<g id="b5"><path d="M-14,12V3H-5V-7H5V3H14V12z" fill="#7c80e0" stroke="#2c38a0"/><path d="M0,-7V-14M0,-14L8,-8M0,-14L-6,-10" stroke="#d83030"/></g>
<g id="b6"><path d="M-16,0L0,-9L16,0L0,9z" fill="#d8b8f0"/><path d="M-16,0V10L0,18V9z" fill="#c0a0e8"/><path d="M16,0V10L0,18V9z" fill="#a878d8"/><path d="M-16,-5L4,-15L16,-6" fill="none" stroke="#aaa"/><path d="M-16,13H14" stroke="#e8c060" stroke-width="3"/></g>
<g id="b7"><rect x="-16" y="-15" width="32" height="30" fill="#e8e8e8" stroke="#333" stroke-width="1.4"/><path d="M-8,-8L6,-12L12,-6V8L-2,12L-8,6z" fill="#b070e8"/><path d="M-8,-8L-2,-3V12L-8,6z" fill="#d8a8f0"/></g>
<g id="b8" fill="none" stroke="#a07070"><path d="M-15,0L0,-10L15,0L0,10z" fill="#eee"/><path d="M-8,0L0,-5L8,0L0,5z" fill="#e0e0e0"/><path d="M-15,0V6L0,16L15,6V0"/><path d="M-8,-4L-8,14" stroke="#d08080"/></g>
<g id="b9"><path d="M-16,2L0,-9L16,2L0,13z" fill="#e8d030"/><path d="M-11,0L2,-9L7,-5L-6,4z" fill="#d84030"/><path d="M-5,5L8,-4L12,-1L0,8z" fill="#e88030"/><path d="M-16,2V5L0,16L16,5V2L0,13z" fill="#222"/></g>
<g id="b10"><rect x="-9" y="-15" width="14" height="12" fill="#fff" stroke="#335"/><text x="-4" y="-5" font-size="9" font-weight="700" style="fill:#2838a8">i</text><path d="M-14,2L2,-4L15,2V10L2,15L-14,8z" fill="#b0c8f4" stroke="#7088d0"/><path d="M14,-10L0,4M2,-8L14,-10" stroke="#d83030"/></g>
<g id="b11"><ellipse cx="8" cy="-8" rx="9" ry="4" fill="#d0d8f8" stroke="#d88"/><path d="M-1,-8V9C3,14 13,14 17,9V-8" fill="#a8b8f0"/><ellipse cx="-10" cy="7" rx="7" ry="5" fill="#a8c0f0"/><path d="M-13,-1L-2,-4" stroke="#e88020" stroke-width="3"/></g>
<g id="b12"><rect x="-15" y="-14" width="30" height="28" fill="#eee" stroke="#444" stroke-width="1.2"/><path d="M-8,-6L4,-10L10,-4V7L-3,11L-8,6z" fill="#d83838"/><path d="M-8,-6L-3,-2V11L-8,6z" fill="#f06060"/></g>
<g id="b13"><path d="M-15,2L2,-6L15,2L2,10z" fill="#f0e0e0" stroke="#c88"/><path d="M-4,-17L6,-14V14L-4,11z" fill="#e8a0b8"/><path d="M2,-2L15,-6V5L2,12z" fill="#eee" stroke="#999"/></g>
<g id="b14"><path d="M-16,-3L0,-9L16,-3V10L-16,10z" fill="#a8c4e8"/><path d="M-16,-3L0,2L16,-3" fill="#cfe0f4"/><path d="M0,-12V14" stroke="#d06040"/><path d="M-12,-13h8M12,-13h-8" stroke="#e88030" stroke-width="1.6"/></g>
<g id="b15"><path d="M-12,-3L6,-8L13,-3V8L-12,10z" fill="#a8c4e8"/><path d="M-12,-3L6,-8L13,-3L-4,2z" fill="#cfe0f4"/><path d="M-1,-15V16" stroke="#c06050"/><path d="M-6,-9H4M-6,10H4" stroke="#c04040"/></g>
<g id="b16"><rect x="-14" y="-10" width="27" height="19" fill="none" stroke="#333" stroke-width="1.6"/><rect x="-16" y="-12" width="4" height="4" fill="#667"/><rect x="11" y="7" width="4" height="4" fill="#667"/></g>
<g id="b17"><path d="M-14,0L-6,-12H7L14,0L7,12H-6z" fill="none" stroke="#3848b0" stroke-width="1.4"/></g>
<g id="b18"><path d="M-11,8V-11" stroke="#2838a8"/><path d="M-11,8L9,-2" stroke="#38a848"/><path d="M-11,8L9,14" stroke="#c83030"/><text x="-2" y="-7" font-size="9" font-weight="700" style="fill:#333">Z</text><text x="10" y="0" font-size="9" font-weight="700" style="fill:#333">Y</text><text x="10" y="15" font-size="9" font-weight="700" style="fill:#333">X</text></g>
<g id="b19"><rect x="-12" y="-11" width="24" height="22" fill="#f8c8d0"/><path d="M-17,0H17M0,-17V17" stroke="#d84848" stroke-dasharray="7 2 2 2"/></g>
<g id="b20"><rect x="-13" y="-12" width="26" height="24" fill="#f8ece8" stroke="#c07070" stroke-width="1.4"/><ellipse rx="8" ry="7" fill="none" stroke="#5050c8" stroke-width="3"/></g>

<!-- right strip -->
<g id="r1"><path d="M-8,-2V15M-8,6H2" stroke="#1c2f90" stroke-width="1.6"/><path d="M2,-1H14" stroke="#222"/><g fill="#f4d040" stroke="#b89020"><rect x="-13" y="-14" width="9" height="7"/><rect x="-4" y="-12" width="9" height="7"/><rect x="-12" y="-7" width="9" height="7"/><rect x="-4" y="-6" width="8" height="7" fill="#e8b830"/><rect x="3" y="5" width="9" height="8"/></g></g>
<g id="r2"><path d="M-11,-14L0,-8L11,-14V0L0,-6L-11,0z" fill="#2030c0"/><path d="M0,-15V14" stroke="#222" stroke-dasharray="2 2"/><rect x="-14" y="2" width="13" height="11" fill="#f0e040" stroke="#222"/><path d="M2,13L2,2L15,13z" fill="#d82020"/></g>
<g id="r3"><ellipse cx="-7" cy="-11" rx="8" ry="3" fill="#d088b0"/><rect x="-15" y="-11" width="16" height="9" fill="#b06090" stroke="#604"/><path d="M-10,-2V15M-10,8H2" stroke="#223a90" stroke-width="1.5"/><path d="M3,-6H15" stroke="#333"/><ellipse cx="8" cy="8" rx="6" ry="5" fill="#fff" stroke="#a04080" stroke-width="2"/><circle cx="8" cy="8" r="1.5" fill="#a04080"/></g>
<g id="r4"><rect x="-15" y="-12" width="9" height="26" fill="#e89030" stroke="#844"/><rect x="-6" y="-13" width="9" height="27" fill="#40c840" stroke="#272"/><rect x="3" y="-14" width="12" height="28" fill="#3890e0" stroke="#226"/><path d="M-15,-3h9M-6,-3h9M3,-3h12" stroke="#fff"/></g>
<g id="r5"><circle cx="-5" cy="5" r="9" fill="#1868c8"/><text x="-7" y="9" font-size="11" font-weight="700" style="fill:#fff">i</text><path d="M-5,-9C5,-11 12,-4 13,4M-4,-14C8,-16 16,-6 15,4" fill="none" stroke="#3070d0" stroke-width="2.2"/></g>
<g id="r6"><path d="M-12,-14H6L12,-8V14H-12z" fill="#f0f4ff" stroke="#5878b0"/><circle cy="1" r="7" fill="#30a0d0"/><path d="M-5,-3l5,-2l2,4l-4,4z" fill="#38a848"/></g>
<g id="r7"><circle r="14" fill="#dfe2ec" stroke="#667" stroke-width="2"/><circle r="10" fill="#fff"/><path d="M0,-7V0H8" stroke="#111" stroke-width="1.8" fill="none"/></g>
<g id="r8"><rect x="-14" y="-14" width="11" height="28" fill="#e83030"/><rect x="-14" y="-6" width="11" height="8" fill="#f0e030"/><rect x="-14" y="2" width="11" height="6" fill="#30d030"/><rect x="-14" y="8" width="11" height="6" fill="#2030e0"/><path d="M-2,-10L10,8" stroke="#111" stroke-width="4"/><path d="M-4,-12l2,4" stroke="#fff" stroke-width="3"/></g>
<g id="r9"><path d="M-12,10V-10l5,-4l3,4V10z" fill="#4880d8" stroke="#224"/><path d="M-10,-5l8,2M-10,0l8,2M-10,5l8,2" stroke="#123"/><path d="M4,-10H14M0,-5L10,8" stroke="#222" stroke-width="2.4"/><path d="M-15,12l4,-3" stroke="#e0c030"/></g>
<g id="r10"><path d="M-12,12c0,-6 6,-6 10,-10l8,-10l8,2l-7,5l-8,10c-2,4 -6,4 -8,6z" fill="#8898a8" stroke="#222"/><path d="M-12,10c4,-2 6,-2 8,0l-2,3h-6z" fill="#e88020"/><path d="M-2,-8L10,2" stroke="#333" stroke-width="3"/></g>
<g id="r11"><path d="M-14,-8L-4,-13V15L-14,10z" fill="#eef" stroke="#556"/><path d="M-7,-11H14V8H-7z" fill="#f4ede0" stroke="#556"/><path d="M-4,-8H12V6H-4z" fill="#d83830"/><path d="M1,-4h6l2,7H-1z" fill="#9cd0f8"/></g>
<g id="r12"><path d="M-14,-8L-4,-13V15L-14,10z" fill="#eef" stroke="#556"/><path d="M-7,-11H14V8H-7z" fill="#fff" stroke="#556"/><circle cx="-2" cy="-7" r="2.2" fill="#2080e0"/><circle cx="-2" cy="-1" r="2.2" fill="#30b040"/><circle cx="-2" cy="5" r="2.2" fill="#d83030"/><path d="M2,-7h9M2,-1h9M2,5h9" stroke="#333"/></g>

<!-- pot (cup with white disc) for model -->
<g id="pot"><path d="M-85,0V52a85,30 0 0 0 170,0V0z" fill="#a8d890"/><path d="M-40,45c20,-10 60,-8 80,-12c10,10 0,34 -30,38c-20,0 -50,0 -50,-26z" fill="none" style="stroke:#4a8a58;stroke-width:1.2"/><ellipse rx="85" ry="38" fill="#4a4044"/><ellipse cy="4" rx="72" ry="29" fill="#f4f8e8"/><ellipse cy="2" rx="18" ry="9" fill="#1020d0" style="stroke:none"/></g>
</defs>

<!-- chrome -->
<rect width="1920" height="1028" fill="#fff"/>
<rect x="0" y="30" width="1920" height="31" fill="#c8d6d6"/>
<path d="M0,102.5H1784M0,144.5H1920" stroke="#cfcfcf" stroke-width="2"/>
<rect x="1880" y="168" width="40" height="820" fill="#dcdcdc"/>
<rect x="1866" y="158" width="54" height="10" fill="#f8f8f8"/>

<!-- title bar -->
<text x="3" y="24" font-size="24" font-weight="700" style="fill:#a4b0b8" textLength="37" lengthAdjust="spacingAndGlyphs">NX</text>
<path d="M46.5,4V26" stroke="#ddd"/>
<text x="51" y="21" font-size="15" textLength="408" lengthAdjust="spacingAndGlyphs">NX 10 - 建模 - [7盖子油缸齿条全自动脱螺纹.prt （修改的） ]</text>
<text x="1739" y="21" font-size="15" font-weight="700" style="fill:#159a9c" textLength="69" lengthAdjust="spacingAndGlyphs">SIEMENS</text>
<g fill="none" stroke="#444" stroke-width="1.3"><path d="M1840,20h8" stroke-width="2"/><rect x="1870" y="13" width="8" height="8"/><path d="M1873,13v-3h8v8h-3"/></g>
<path d="M1898,10l10,11M1908,10l-10,11" stroke="#333" stroke-width="1.3"/>
<g transform="translate(1236,0)"><rect x="0" y="0" width="90" height="14" fill="#eee" opacity=".6"/><rect x="4" y="14" width="84" height="4" fill="#ddd" opacity=".5"/><path d="M28,0L36,5L70,5V0z" fill="#c8c8c8"/><rect x="44" y="1" width="22" height="3" fill="#e05050"/><rect x="77" y="0" width="10" height="5" rx="1" fill="#30a848"/></g>

<!-- menu -->
<g transform="translate(18,45)"><path d="M-4,-9L3,-13L9,-9V6L2,10L-6,6V-4z" fill="#2e66c8"/><path d="M-4,-9L3,-5V10M3,-5L9,-9" stroke="#bcd" fill="none"/></g>
<g font-size="14">
<text x="34" y="50">文件(<tspan text-decoration="underline">F</tspan>)</text>
<text x="92" y="50">编辑(<tspan text-decoration="underline">E</tspan>)</text>
<text x="151" y="50">视图(<tspan text-decoration="underline">V</tspan>)</text>
<text x="211" y="50">插入(<tspan text-decoration="underline">S</tspan>)</text>
<text x="270" y="50">格式(<tspan text-decoration="underline">R</tspan>)</text>
<text x="331" y="50">工具(<tspan text-decoration="underline">T</tspan>)</text>
<text x="389" y="50">装配(<tspan text-decoration="underline">A</tspan>)</text>
<text x="450" y="50">信息(<tspan text-decoration="underline">I</tspan>)</text>
<text x="505" y="50">分析(<tspan text-decoration="underline">L</tspan>)</text>
<text x="571" y="50">首选项(<tspan text-decoration="underline">P</tspan>)</text>
<text x="645" y="50">窗口(<tspan text-decoration="underline">O</tspan>)</text>
<text x="707" y="50">GC工具箱</text>
<text x="781" y="50" textLength="84" lengthAdjust="spacingAndGlyphs">星空 V6.936F</text>
<text x="877" y="50">帮助(<tspan text-decoration="underline">H</tspan>)</text>
<text x="940" y="50" textLength="115" lengthAdjust="spacingAndGlyphs">HB_MOULD <tspan text-decoration="underline">M</tspan>6.5</text>
</g>
<g fill="none" stroke="#333" stroke-width="1.3"><path d="M1854,50h8" stroke-width="2"/><rect x="1875" y="44" width="8" height="8"/><path d="M1879,44v-3h8v8h-4"/></g>
<path d="M1898,40l10,11M1908,40l-10,11" stroke="#333" stroke-width="1.3"/>

<!-- toolbar separators -->
<g class="sep"><path d="M206,66V98M368,66V98M464,66V98M522,66V98M605,66V98M1210,66V98M1419,66V98M1502,66V98M1676,66V98M1784,62V102"/>
<path d="M1277,105V142M1321,105V142M1417,105V142M1473,104V144M1191,105V142"/></g>
<g stroke="#999" stroke-dasharray="2 2"><path d="M3,66V98M793,66V98M1306,66V98M3,106V141M346,106V141M888,106V141M1144,106V141"/></g>

<!-- row 1 -->
<use href="#start" x="27" y="82"/><text x="47" y="87" font-size="14">启动</text><use href="#dd" x="81" y="82"/>
<use href="#doc" x="106" y="82"/><use href="#fold" x="144" y="82"/><use href="#flop" x="184" y="82"/>
<use href="#sc" x="228" y="82"/><use href="#cp" x="268" y="82"/><use href="#pt" x="307" y="82"/><use href="#xx" x="346" y="83"/>
<use href="#undo" x="392" y="82"/><use href="#dd" x="416" y="81"/><use href="#redo" x="442" y="82"/>
<use href="#wed" x="487" y="82"/><use href="#dd" x="513" y="81"/>
<use href="#dia" x="544" y="82"/><use href="#win2" x="582" y="82"/>
<rect x="613.5" y="70.5" width="157" height="23" fill="#fff" stroke="#999"/>
<text x="615" y="88" font-size="14">查找命令</text>
<g transform="translate(757,82)" fill="none" stroke="#555"><circle cx="1" cy="-3" r="4.5"/><path d="M-2,1L-5,7" stroke-width="2"/></g>
<use href="#dd" x="781" y="93"/>
<use href="#fit" x="816" y="82"/><use href="#dd" x="842" y="81"/><use href="#ext" x="866" y="82"/><use href="#lsb" x="904" y="82"/>
<use href="#wed" x="946" y="82"/><use href="#dd" x="971" y="81"/><use href="#box" x="995" y="82"/><use href="#dd" x="1022" y="81"/><use href="#wire" x="1047" y="82"/>
<use href="#ora" x="1085" y="82"/><use href="#grn" x="1124" y="82"/><use href="#dd" x="1151" y="81"/><use href="#dkr" x="1176" y="82"/><use href="#dd" x="1202" y="81"/>
<use href="#mov" x="1235" y="82"/><use href="#mov2" x="1272" y="82"/><use href="#dd" x="1297" y="93"/>
<use href="#lst" x="1333" y="82"/><use href="#dd" x="1359" y="81"/><use href="#net" x="1383" y="82"/><use href="#dd" x="1411" y="81"/>
<use href="#hand" x="1441" y="82"/><use href="#pal" x="1480" y="82"/>
<use href="#d1" x="1523" y="81"/><use href="#dd" x="1551" y="81"/><use href="#d2" x="1585" y="82"/><use href="#d3" x="1613" y="82"/><use href="#d4" x="1654" y="82"/>
<use href="#chain" x="1700" y="82"/><use href="#dd" x="1725" y="81"/><use href="#rul" x="1754" y="84"/><use href="#dd" x="1776" y="92"/>

<!-- row 2 -->
<use href="#s1" x="28" y="122"/><use href="#s2" x="66" y="122"/><use href="#s3" x="105" y="123"/><use href="#s4" x="144" y="123"/><use href="#s5" x="182" y="123"/><use href="#s6" x="222" y="123"/><use href="#s7" x="263" y="122"/><use href="#dd" x="287" y="122"/><use href="#tube" x="312" y="124"/><use href="#dd" x="337" y="134"/>
<use href="#ln" x="375" y="124"/><use href="#dd" x="399" y="123"/><use href="#ln" x="424" y="124"/><use href="#arc" x="463" y="124"/><use href="#rct" x="502" y="124"/><use href="#pts" x="542" y="124"/>
<text x="566" y="134" font-size="30" font-weight="700" style="font-family:'Liberation Serif',serif;fill:#333">A</text>
<use href="#shp" x="618" y="124"/><use href="#off" x="658" y="123"/><use href="#cr1" x="696" y="124"/><use href="#cr2" x="735" y="124"/><use href="#prj" x="776" y="124"/><use href="#prj2" x="814" y="124"/><use href="#ext2" x="854" y="124"/><use href="#dd" x="879" y="134"/>
<use href="#key" x="914" y="124"/><use href="#trm" x="952" y="124"/><use href="#trm2" x="991" y="124"/><use href="#s_c" x="1030" y="124"/><use href="#s_d" x="1073" y="124"/><use href="#s_e" x="1110" y="124"/><use href="#dd" x="1135" y="134"/>
<use href="#bow" x="1169" y="123"/><use href="#wave" x="1216" y="124"/><use href="#sq" x="1254" y="124"/><use href="#fold3" x="1299" y="124"/><use href="#rb" x="1345" y="123"/><use href="#dd" x="1370" y="123"/><use href="#sq2" x="1395" y="123"/><use href="#twin" x="1441" y="123"/><use href="#dd" x="1465" y="134"/>
<g font-size="34" style="font-family:'Noto Serif CJK SC','Noto Sans CJK SC',serif">
<text x="1534" y="137" textLength="178" style="fill:#e4202c;font-family:'Noto Serif CJK SC',serif">在职工程师</text>
<text x="1732" y="137" textLength="68" style="fill:#e4202c;font-family:'Noto Serif CJK SC',serif">杨工</text>
<text x="1822" y="137" textLength="68" style="fill:#e4202c;font-family:'Noto Serif CJK SC',serif">原创</text>
</g>
<rect x="1845" y="150" width="15" height="15" fill="#aaa"/><path d="M1846,151l13,13M1846,157l7,7M1852,151l7,7" stroke="#eee"/>
<g fill="none" stroke="#888"><path d="M1867,152v-2h4M1876,150h4v2M1867,163v2h4M1880,163v2h-4"/></g><rect x="1870" y="152" width="7" height="11" fill="#6878a8"/>

<!-- VIEWPORT -->
<rect x="108.5" y="168" width="1669" height="820" fill="#212227"/>
<path d="M108.5,988V168.5H1777.5V988Z" fill="none" stroke="#c08030"/>

<!-- hydraulic cylinder (zoom 8 coords) -->
<g transform="translate(1100,290) scale(.33333)">
 <g class="n">
 <path d="M405,330L1095,122L1103,155L460,350z" fill="#00eaea"/>
 <path d="M1070,85L1255,170V435L1215,425L1120,380L1070,365z" fill="#00b8b8"/>
 <path d="M1070,85L1175,52L1360,140L1255,170z" fill="#00f2f2"/>
 <path d="M1258,172L1360,142V410L1265,438z" fill="#00abab"/>
 <path d="M1245,170V432M1070,95L1250,180M1258,178L1360,150" style="stroke:#115858;stroke-width:1.2"/>
 <path d="M500,375L1130,178Q1170,180 1190,205L880,300L530,420z" fill="#00e4e4"/>
 <path d="M530,430L1195,230Q1222,290 1190,358L530,550z" fill="url(#gC)"/>
 <path d="M515,392L1225,185L1236,213L525,425z" fill="#00f0f0"/>
 <path d="M530,590L1225,380L1236,412L530,625z" fill="#00dcdc"/>
 <path d="M290,325L340,308L525,395L470,410z" fill="#00e2e2"/>
 <path d="M470,410L525,395L530,680L510,685L505,430z" fill="#00adad"/>
 <ellipse cx="520" cy="480" rx="13" ry="30" fill="#2f9a2a"/><ellipse cx="520" cy="695" rx="13" ry="32" fill="#2f9a2a"/>
 <path d="M100,320L150,338V445L100,465z" fill="#8aa82c"/>
 <path d="M150,340L295,405L150,465z" fill="#a8a4c8"/>
 <ellipse cx="163" cy="422" rx="10" ry="18" fill="#e8e8f0"/>
 <path d="M100,490L300,405L415,455L100,552z" fill="#c4f03c"/>
 <path d="M100,553L415,460V815L180,890L150,900V620L100,590z" fill="#8aab2c"/>
 <path d="M65,625L100,590L150,610V970L100,985V900L65,880z" fill="#8aab2c"/>
 <path d="M100,590L150,610L65,640z" fill="#c4f03c"/>
 <path d="M150,610V970" style="stroke:#333;stroke-width:1.4"/>
 <ellipse cx="160" cy="632" rx="15" ry="40" fill="#eee"/><ellipse cx="160" cy="880" rx="15" ry="40" fill="#eee"/>
 <path d="M50,280L125,255L505,430L425,455z" fill="#cfc8e8"/>
 <path d="M425,455L505,436V790L425,812z" fill="#8f88b0"/>
 <path d="M422,455V812" style="stroke:#222;stroke-width:1.5"/><path d="M428,452L503,430" style="stroke:#fff;stroke-width:3"/>
 </g>
</g>

<!-- bottom of mould (zoom 7 coords) -->
<g transform="translate(320,500) scale(.5485,.33333)" class="o">
 <path d="M20,825L65,808L1480,825L1525,860L645,1305z" fill="#f2f2f2"/>
 <path d="M20,825L645,1305V1420L20,945z" fill="#dcdcdc"/>
 <path d="M645,1305L1525,860V985L645,1420z" fill="#e6e6e6"/>
 <path d="M605,880L1380,500V745L590,1135L500,1185L500,800z" fill="#d8d8d8"/>
 <path d="M1380,500L1480,435V825L1380,745z" fill="#c8c8c8"/>
 <path d="M605,1262L1480,825L1380,745L510,1185z" fill="#f0f0f0"/>
 <path d="M615,1265L1505,850" fill="none"/>
 <path d="M620,1280L1520,870" fill="none"/>
 <path d="M705,800h43V1145a21,12 0 0 1 -43,0z" fill="url(#gPin)"/>
 <path d="M968,680h44V1010a22,12 0 0 1 -44,0z" fill="url(#gPin)"/>
 <path d="M1232,540h43V875a21,12 0 0 1 -43,0z" fill="url(#gPin)"/>
 <path d="M606,1100h29V1195a14,8 0 0 1 -29,0z" fill="#e9e9c8"/><ellipse cx="620" cy="1100" rx="14" ry="8" fill="#fff"/>
 <path d="M1345,728h29V820a14,8 0 0 1 -29,0z" fill="#e9e9c8"/><ellipse cx="1360" cy="728" rx="14" ry="8" fill="#fff"/>
 <path d="M65,470L165,540V925L65,855z" fill="#cfcfcf"/>
 <path d="M165,540L500,770V1185L165,925z" fill="#fff"/>
 <path d="M172,735L282,670L500,800V985z" fill="#fff" style="stroke:none"/>
 <path d="M172,740L498,985V1045L172,810z" fill="#b8bac4"/>
 <path d="M172,828L498,1050V1155L172,925z" fill="#c4a8b4"/>
 <ellipse cx="215" cy="727" rx="12" ry="8" fill="#2a3ad0"/><ellipse cx="492" cy="940" rx="10" ry="10" fill="#2a3ad0"/>
 <g fill="#2a3ad0"><ellipse cx="275" cy="612" rx="55" ry="20" style="stroke:none"/><ellipse cx="275" cy="650" rx="55" ry="20" style="stroke:none"/><ellipse cx="275" cy="690" rx="55" ry="20" style="stroke:none"/><ellipse cx="278" cy="724" rx="55" ry="20" style="stroke:none"/><rect x="222" y="600" width="110" height="130" style="stroke:none"/><ellipse cx="482" cy="790" rx="20" ry="20" style="stroke:none"/><ellipse cx="482" cy="830" rx="20" ry="20" style="stroke:none"/><ellipse cx="482" cy="870" rx="20" ry="20" style="stroke:none"/><ellipse cx="482" cy="900" rx="20" ry="14" style="stroke:none"/></g>
 <path d="M225,636q50,22 105,-3M225,676q50,22 105,-3" fill="none" style="stroke:#8088e8;stroke-width:1.2"/>
 <path d="M500,810L600,880V1262L500,1185z" fill="#cfcfcf"/>
 <path d="M600,880V1262L608,1262V880z" fill="#ededed"/>
 <path d="M645,1305V1420" stroke-width="1"/>
 <path d="M620,1280l30,-8l30,6l-32,14z" fill="#e8e8e8"/>

 <!-- blue plate -->
 <path d="M65,230L600,590H660L1480,190V435L600,870L500,810L65,465z" fill="#00a6dc"/>
 <path d="M500,790L1220,430L1400,355L1480,430L600,870z" fill="#0db0ec"/>
 <path d="M65,465L250,365L500,550V790L600,870L500,810z" fill="#00aee6"/>
 <path d="M65,465L220,360L250,400L165,540z" fill="#22b4ec" style="stroke:none"/>
 <path d="M370,440V530L425,570V490zM420,485L490,540V600L425,560z" fill="#00c8f8"/>
 <path d="M218,435V560a59,25 0 0 0 118,0V435z" fill="#0088bc"/><ellipse cx="277" cy="435" rx="59" ry="28" fill="#00aee0"/>
 <path d="M458,610V740a60,26 0 0 0 120,0V610z" fill="#0088bc"/><ellipse cx="518" cy="610" rx="60" ry="26" fill="#00a0d0"/>
 <path d="M705,560h43V750a21,10 0 0 1 -43,0z" fill="#0088bc"/>
 <path d="M968,430h44V615a22,10 0 0 1 -44,0z" fill="#0088bc"/>
 <path d="M1232,320h43V485a21,10 0 0 1 -43,0z" fill="#0088bc"/>
 <path d="M1212,310v50a60,25 0 0 0 118,0V285z" fill="#0088bc"/>
 <path d="M1040,410l60,-30l-20,40a40,16 0 0 1 -60,0zM750,540L830,510l-10,30a40,16 0 0 1 -70,10z" fill="#0088bc"/>
 <path d="M660,590L1480,190V215L660,610z" fill="#00d8ff"/>
 <path d="M600,420V860" fill="none"/>
 <path d="M65,230L105,235V275zM1440,215L1480,195V300L1440,250z" fill="#00c8f4"/>
 <path d="M600,873L1480,438" style="stroke:#fff;stroke-width:3" fill="none"/>

 <!-- pink plate -->
 <path d="M65,60L560,410L660,420L1480,15V190L660,590H560L65,215z" fill="#ecb8ec"/>
 <g class="n">
 <path d="M190,265L300,232L400,350L412,400L340,410L250,310z" fill="#38b4f0"/>
 <path d="M470,480L600,430L700,500L830,510L700,585L580,590z" fill="#40b8f0"/>
 <path d="M915,290L960,360L1100,350L1270,210L1350,85L1440,150L1200,260L1020,370L800,470L710,450z" fill="#38b4f0"/>
 </g>
 <path d="M660,420Q800,470 915,340V300z" fill="#d890d8" style="stroke:#fff"/>
 <path d="M930,290Q1080,310 1192,200V160z" fill="#d890d8" style="stroke:#fff"/>
 <path d="M65,75L180,145L65,195z" fill="#c67ec4"/>
 <path d="M65,60L105,58L560,385L558,415z" fill="#f8ccf4"/>
 <path d="M1440,25L1480,15V150L1440,130z" fill="#c878c4"/>
 <path d="M1360,65L1440,30V35L1375,80z" fill="#f4c0e8"/>
 <path d="M1440,140L1480,150V185L1425,120z" fill="#f0b8ec"/>
 <path d="M705,400h43V485a21,10 0 0 1 -43,0z" fill="#dc90d8"/>
 <path d="M968,250h44V355a22,10 0 0 1 -44,0z" fill="#dc90d8"/>
 <path d="M1232,110h43V222a21,10 0 0 1 -43,0z" fill="#f0a8e8"/>
 <path d="M1330,295L1440,200V350L1390,340z" fill="#3a8a60"/>
 <ellipse cx="1398" cy="298" rx="30" ry="36" fill="#88c8d8"/>
 <path d="M1425,50l-60,30c-10,10 0,40 10,35l55,-25z" fill="#f4c0e8"/>
 <path d="M560,410H656V445L600,475L558,440z" fill="#d890d8"/>
 <path d="M580,450L620,450L600,470z" fill="#f8d8f8"/>
 <path d="M560,590H656V625L610,635L558,615z" fill="#008ab8"/>
 <path d="M585,625h40l-20,18z" fill="#c8e0f0"/>
</g>

<!-- rod detail, crop B coords -->
<g transform="translate(350,480) scale(.33333)" class="o">
 <path d="M20,525L320,430L345,442L80,548z" fill="#10c8f4"/>
 <path d="M20,305L325,428L20,525z" fill="#0088bc"/>
 <path d="M20,525L320,430L342,440L80,548z" fill="#10c8f4"/>
 <path d="M150,575L250,490L268,520L190,600z" fill="#a8d8ec" style="stroke:none"/>
 <path d="M225,500L270,470L285,505L240,530z" fill="#40b8f0" style="stroke:none"/>
 <path d="M320,250H412V350a46,14 0 0 1 -92,0z" fill="#d2c440"/><path d="M343,250V360M367,250V362M390,250V360" style="stroke:#e8a8d8;stroke-width:2" fill="none"/>
 <path d="M320,420H412V480a46,14 0 0 1 -92,0z" fill="#bdbc2c"/><path d="M350,425V490M380,425V490" style="stroke:#3aa8c8;stroke-width:1.5" fill="none"/>
 <path d="M717,430H810V535a46,14 0 0 1 -93,0z" fill="#d2c440"/><path d="M740,432V545M765,432V545M787,432V545" style="stroke:#e8a8d8;stroke-width:2" fill="none"/>
 <path d="M717,605H810V670H717z" fill="#bdbc2c"/><path d="M745,610V670M780,610V670" style="stroke:#3aa8c8;stroke-width:1.5" fill="none"/>
 <path d="M900,475V655" style="stroke:#d890d8;stroke-width:3" fill="none"/>
</g>
<!-- floor detail, crop C coords -->
<g transform="translate(760,480) scale(.33333)" class="o">
 <path d="M150,680L400,600L640,530L830,560L620,612L280,690z" fill="#a8d8ec" style="stroke:none"/>
 <path d="M780,520L950,420L1000,460L860,520z" fill="#a8d8ec" style="stroke:none"/>
 <path d="M0,690L950,418" fill="none"/>
 <path d="M270,490h72V670a36,14 0 0 1 -72,0z" fill="#0088bc" style="stroke:none"/>
 <path d="M705,370h72V540a36,14 0 0 1 -72,0z" fill="#0088bc"/>
 <path d="M0,565L1038,260" style="stroke:#10d8ff;stroke-width:3" fill="none"/>
</g>

<!-- top half: lower plate & columns (zoom 6 coords) -->
<g transform="translate(320,170) scale(.5485,.33333)" class="o">
 <path d="M65,1015L600,1425L1480,985V700L65,710z" fill="#b3a87e"/>
 <g class="n">
 <path d="M110,1030L200,1090L280,1110L340,1120L300,1030L250,1020z" fill="#e4bcdc"/>
 <path d="M360,1080L480,1090L560,1140L540,1200L430,1160z" fill="#e4bcdc"/>
 <path d="M270,1160L400,1230L490,1290L440,1270z" fill="#e4bcdc"/>
 <path d="M680,1280L860,1210L1000,1260L760,1340z" fill="#e4bcdc"/>
 <path d="M900,1190L1130,1180L1240,1110L1290,1030L1470,1000L1200,1120L1000,1240z" fill="#e4bcdc"/>
 <path d="M1150,1040L1300,1030L1340,960L1440,990L1300,1050z" fill="#e4bcdc"/>
 <path d="M580,1350L640,1400L600,1425L560,1385z" fill="#d8b8c8"/>
 </g>
 <path d="M65,1015L600,1425" style="stroke:#111;stroke-width:1.2" fill="none"/>
 <path d="M660,1425L1480,1015" style="stroke:#fff;stroke-width:3" fill="none"/>
 <path d="M650,1418L1480,1000" style="stroke:#222;stroke-width:1" fill="none"/>

 <path d="M65,710L105,740L110,1000L65,1020z" fill="#7f7558"/>
 <path d="M1380,690L1480,680V985L1400,930z" fill="#766c4e"/>

 <ellipse cx="800" cy="1170" rx="118" ry="90" fill="#b3a87e"/>
 <ellipse cx="1100" cy="1090" rx="95" ry="70" fill="#b3a87e"/>
 <path d="M790,1100h95v120a47,14 0 0 1 -95,0z" fill="#8f8a68"/>
 <path d="M830,1100V1230M860,1100V1230" fill="none"/>
 <path d="M1120,970h55v100a27,10 0 0 1 -55,0z" fill="#8f8a68"/>
 <path d="M150,760h90V1020h-90z" fill="url(#gCol)"/>
 <path d="M142,1010V1040a52,22 0 0 0 104,0V1010z" fill="#9a9270"/><ellipse cx="193" cy="1010" rx="50" ry="22" fill="#a09a80"/>
 <path d="M1310,700h90V960h-90z" fill="url(#gCol)"/>
 <path d="M1305,960V985a50,22 0 0 0 100,0V960z" fill="#9a9270"/><ellipse cx="1355" cy="958" rx="50" ry="22" fill="#a09a80"/>
 <path d="M248,830h57V1105a28,12 0 0 1 -57,0z" fill="#d4c81a"/>
 <path d="M490,1020h58V1290a29,12 0 0 1 -58,0z" fill="#d4c81a"/>
 <path d="M262,840V1110M278,840V1115M505,1030V1300M520,1030V1300" style="stroke:#8e8810;stroke-width:1" fill="none"/>
 <path d="M705,1180h43V1300a21,10 0 0 1 -43,0z" fill="#c8843a"/>
 <path d="M1235,905h40V1035a20,10 0 0 1 -40,0z" fill="#c8843a"/>
 <path d="M970,1050h30V1175h-30z" fill="#c8843a"/>
 <path d="M1272,880h22V920h-22z" fill="#d4c81a"/>
 <path d="M420,950h20V1120h-20z" fill="#8f8a68"/><path d="M415,1085h30v35a15,8 0 0 1 -30,0z" fill="#8f8a68"/>
 <path d="M375,985c20,-15 30,-10 35,10c3,30 -5,50 -20,55l-55,45c-15,-5 -20,-30 -15,-55z" fill="#a09a78"/>
 <ellipse cx="340" cy="1050" rx="27" ry="42" fill="#c4bc94"/>
 <path d="M575,1090h90V1350h-90z" fill="url(#gCol)"/>
 <path d="M568,1330V1360a52,24 0 0 0 104,0V1330z" fill="#9a9270"/><ellipse cx="620" cy="1330" rx="52" ry="24" fill="#a8a286"/>
 <path d="M605,1100V1420" fill="none"/>
</g>

<!-- interior of the mould (crop A coords, 3x of real px) -->
<g transform="translate(500,280) scale(.33333)" class="o">
 <path d="M0,330L910,50L800,190L130,400z" fill="#b8a4ac"/>
 <path d="M910,50L1075,120V180H960L800,190z" fill="#c8a8c8"/>
 <path d="M130,400L800,190L1075,180L260,430z" fill="#f2e0f4"/>
 <path d="M0,330L75,420L130,400z" fill="#c8b4bc" style="stroke:none"/>
 <path d="M800,190L650,240L800,200z" fill="#fff"/>
 <path d="M360,310L440,288L530,330L400,365z" fill="#f6f0f6"/>
 <path d="M360,310V335L400,365L530,330" fill="#ddd0dc"/>
 <path d="M470,295L590,260L650,290L530,325z" fill="#fbf4fb"/>
 <ellipse cx="40" cy="352" rx="42" ry="36" fill="#d8ccd4"/><ellipse cx="845" cy="130" rx="58" ry="56" fill="#d4c8d0"/>
 <path d="M820,90L870,170M870,90L820,170M790,130H900" fill="none" style="stroke:#a89aa4;stroke-width:1"/>
 <path d="M860,135L990,195" style="stroke:#c8ccd0;stroke-width:6" fill="none"/>
 <ellipse cx="848" cy="130" rx="22" ry="20" fill="#6e6e64"/>
 <path d="M210,290L312,295L255,420L175,425z" fill="#d8bcc8"/><ellipse cx="262" cy="290" rx="50" ry="20" fill="#fff"/><ellipse cx="262" cy="294" rx="41" ry="12" fill="#c8a4b0"/>
 <path d="M688,150L770,160L722,285L650,280z" fill="#d8bcc8"/><ellipse cx="735" cy="144" rx="50" ry="19" fill="#fff"/><ellipse cx="735" cy="148" rx="41" ry="11" fill="#b89aa4"/>
 <ellipse cx="352" cy="384" rx="20" ry="9" fill="#c0b8e8"/><ellipse cx="572" cy="318" rx="20" ry="9" fill="#c0b8e8"/><ellipse cx="825" cy="240" rx="20" ry="9" fill="#c0b8e8"/>
 <path d="M245,425L1075,180" style="stroke:#7a8a90;stroke-width:5.5" fill="none"/>
 <path d="M245,425L1075,180" style="stroke:#cfdfe2;stroke-width:4" fill="none"/>
 <path d="M330,490L1000,250L1340,240L1480,320L700,600L540,610z" fill="#a8d890"/>
 <path d="M550,465L1000,270L1290,280L550,510z" fill="#e2cdb0" style="stroke:none"/>
 <path d="M555,470L640,490L555,510zM1000,270L1190,260L1240,290L1060,300z" fill="#a8e090" style="stroke:none"/>
 <ellipse cx="880" cy="345" rx="112" ry="40" fill="none" style="stroke:#80c870;stroke-width:1.6"/>
 <path d="M550,515L1290,285L1295,300L550,535z" fill="#d8b498"/>
 <path d="M550,535L1320,298L1345,318L550,560z" fill="#a8d890"/>
 <path d="M550,572L1250,352L1260,368L550,592z" fill="#d8b498"/>
 <path d="M1265,320L1342,298V322L1268,342zM1270,342L1340,340V365z" fill="#a8d890"/>
 <path d="M1340,250L1480,320L1340,355z" fill="#e0c8d8"/>
 <path d="M1145,195L1190,205L1240,198V240L1150,245z" fill="#8ec87c"/>
 <path d="M680,505V530a50,22 0 0 0 100,0V505z" fill="#a8d890"/><ellipse cx="730" cy="505" rx="50" ry="22" fill="#c4e8b0"/>
 <path d="M1155,362V385a50,22 0 0 0 100,0V362z" fill="#a8d890"/><ellipse cx="1205" cy="362" rx="50" ry="22" fill="#c4e8b0"/>
 <use href="#pot" x="395" y="435"/><use href="#pot" x="615" y="367"/><use href="#pot" x="853" y="296"/><use href="#pot" x="1070" y="228"/>
 <path d="M700,340L750,325L760,370L715,385z" fill="#a8d890"/>
 <path d="M731,170h5V315h-5z" fill="#2028d8" style="stroke:none"/><path d="M733,180l6,35l-6,35l-6,-35z" fill="#2028d8" style="stroke:none"/>
 <path d="M745,330L830,372L822,378L735,335z" fill="#c82020" style="stroke:none"/>
 <path d="M750,320L860,290L865,298L760,328z" fill="#38a040" style="stroke:none"/>
 <ellipse cx="730" cy="323" rx="24" ry="12" fill="#d0a8b0"/>
</g>
<g font-size="11"><text x="749" y="336" style="fill:#3038e0">ZC</text><text x="775" y="370" font-size="10" style="fill:#40a040">YC</text><text x="765" y="417" style="fill:#d83030">XC</text></g>

<!-- upper plate bars (zoom 6 coords) -->
<g transform="translate(320,170) scale(.5485,.33333)" class="o">
 <path d="M795,310L885,380L800,420z" fill="#d8a0d8"/>
 <path d="M840,290L975,265L1310,510L1440,620L1430,700L1380,690L1290,650L1120,500L1000,390z" fill="#b3a878"/>
 <path d="M795,310L845,295L1030,435L985,455L795,340z" fill="#f4c0ec"/>
 <path d="M985,445L1030,430L1180,550L1145,565z" fill="#f4b4a8"/>
 <path d="M1050,470L1085,450L1110,470V505L1075,520L1050,495z" fill="#f0a098"/>
 <path d="M1150,575L1190,560L1370,700L1335,720z" fill="#f4c0ec"/>
 <path d="M1245,640L1370,700V805L1335,838L1280,800z" fill="#b478b0"/>
 <path d="M1335,720L1375,700V805L1335,838z" fill="#dc90d8"/>
 <g fill="#a8b8a0"><ellipse cx="845" cy="318" rx="14" ry="9"/><ellipse cx="912" cy="370" rx="14" ry="9"/><ellipse cx="981" cy="423" rx="14" ry="9"/><ellipse cx="1195" cy="585" rx="14" ry="9"/><ellipse cx="1264" cy="636" rx="14" ry="9"/><ellipse cx="1331" cy="688" rx="14" ry="9"/></g>

 <path d="M665,930L1235,650L1280,810L755,1075z" fill="#a5d98a"/>
 <ellipse cx="1215" cy="745" rx="35" ry="65" fill="#3c3524"/><ellipse cx="1222" cy="745" rx="24" ry="50" fill="#5a4f36"/>
 <ellipse cx="730" cy="985" rx="35" ry="60" fill="#3c3524"/>
 <path d="M760,1075L1280,810L1340,860L1010,1020L755,1155z" fill="#b3a878"/>
 <path d="M960,950L1000,925L1062,985V1040L1020,1060L1018,1010L962,975z" fill="#aeaad8"/>
 <ellipse cx="1016" cy="965" rx="14" ry="9" fill="#a8b8a0"/>
 <g fill="#3c3524"><path d="M985,1090l35,-25l30,25l10,55l-30,30l-35,-30z"/><path d="M1065,1055l40,-30l30,25l5,55l-30,35l-40,-30z"/></g>
 <ellipse cx="1035" cy="1130" rx="22" ry="40" fill="#4a4130"/><ellipse cx="1117" cy="1085" rx="22" ry="40" fill="#4a4130"/>
 <ellipse cx="1037" cy="1130" rx="6" ry="11" fill="#1e1a10"/><ellipse cx="1119" cy="1085" rx="6" ry="11" fill="#1e1a10"/>

 <path d="M105,700L130,650L235,625L240,650L660,960L715,1030L670,1055L560,1050L110,715z" fill="#b3a878"/>
 <path d="M65,710L110,700V740z" fill="#b3a878"/>
 <path d="M235,625L385,740L370,760L240,660z" fill="#f4c0ec"/>
 <path d="M375,755L410,745L520,820L560,880L540,900L510,880z" fill="#f4b4a8"/>
 <path d="M440,770L475,755L500,780V815L465,830L440,805z" fill="#f0a098"/>
 <path d="M530,885L570,880L660,960V975L610,945z" fill="#f4c0ec"/>
 <path d="M660,960L700,990L750,1015V1125L710,1150L680,1125z" fill="#dc90d8"/>
 <path d="M680,1000L712,1030V1148L680,1125z" fill="#b478b0"/>
 <g fill="#a8b8a0"><ellipse cx="283" cy="686" rx="14" ry="9"/><ellipse cx="352" cy="738" rx="14" ry="9"/><ellipse cx="564" cy="900" rx="14" ry="9"/><ellipse cx="703" cy="1003" rx="14" ry="9"/></g>
 <path d="M555,1060L650,1060L660,1085L605,1110L560,1085z" fill="#8f8a68"/>
 <path d="M580,1090h40l-20,20z" fill="#d8d2b0"/>
 <ellipse cx="725" cy="1170" rx="22" ry="14" fill="#c8c090"/>

 <g fill="#f2e40c"><ellipse cx="275" cy="755" rx="28" ry="16"/><ellipse cx="518" cy="938" rx="28" ry="16"/><ellipse cx="1028" cy="377" rx="28" ry="16"/><ellipse cx="1270" cy="558" rx="28" ry="16"/></g>

 <g>
 <path d="M890,70V315a42,20 0 0 0 85,0V70z" fill="url(#gP)"/><ellipse cx="932" cy="70" rx="42" ry="22" fill="#3a7ee0"/><path d="M890,265a42,16 0 0 0 85,0" fill="none" style="stroke:#a8c8f0;stroke-width:1"/>
 <path d="M1312,390V635a42,20 0 0 0 85,0V390z" fill="url(#gP)"/><ellipse cx="1354" cy="390" rx="42" ry="22" fill="#3a7ee0"/><path d="M1312,585a42,16 0 0 0 85,0" fill="none" style="stroke:#a8c8f0;stroke-width:1"/>
 <path d="M152,442V687a42,20 0 0 0 85,0V442z" fill="url(#gP)"/><ellipse cx="194" cy="442" rx="42" ry="22" fill="#3a7ee0"/><path d="M152,637a42,16 0 0 0 85,0" fill="none" style="stroke:#a8c8f0;stroke-width:1"/>
 <path d="M577,760V1005a42,20 0 0 0 85,0V760z" fill="url(#gP)"/><ellipse cx="619" cy="760" rx="42" ry="22" fill="#3a7ee0"/><path d="M577,955a42,16 0 0 0 85,0" fill="none" style="stroke:#a8c8f0;stroke-width:1"/>
 </g>
</g>

<!-- triad -->
<g transform="translate(190,912)">
<path d="M-18,-5L-3,-12L14,-5L-2,3z" fill="#c8ccc8" opacity=".9"/><path d="M-18,-5L-2,3V20L-18,12z" fill="#a8b0a8"/><path d="M14,-5L-2,3V20L14,12z" fill="#8a9690"/>
<path d="M-14,8V-27" stroke="#2838c8" stroke-width="2"/><path d="M-14,8L18,-4" stroke="#30b050" stroke-width="2"/><path d="M-14,8L14,22" stroke="#d03030" stroke-width="2"/>
<text x="-19" y="-28" font-size="10" style="fill:#3038e0">Z</text><text x="16" y="-4" font-size="9" style="fill:#30b050">Y</text><text x="13" y="29" font-size="10" style="fill:#d03030">X</text>
</g>

<!-- specks -->
<g fill="#ddd"><rect x="1452" y="596" width="1" height="1"/><rect x="1420" y="595" width="1" height="1"/><rect x="1484" y="596" width="1" height="1"/><rect x="1484" y="628" width="1" height="1"/><rect x="1510" y="640" width="1" height="1"/><rect x="1540" y="680" width="1" height="1"/><rect x="1580" y="660" width="1" height="1"/><rect x="1640" y="640" width="1" height="1"/><rect x="1510" y="700" width="1" height="1"/><rect x="1540" y="716" width="1" height="1"/><rect x="1305" y="833" width="1" height="1"/><rect x="1272" y="865" width="1" height="1"/><rect x="1336" y="865" width="1" height="1"/><rect x="1305" y="898" width="1" height="1"/></g>

<!-- crosshair -->
<path d="M109,698.5H356M1132,698.5H1368M1425,698.5H1777" stroke="#eee"/>
<path d="M356,698.5H1132" stroke="#8a8a8a"/>
<path d="M1392.5,168V347M1392.5,463V672M1392.5,728V988" stroke="#eee"/>
<path d="M1392.5,347V463" stroke="#7f9f9f"/>
<circle cx="1392" cy="700" r="22" fill="#c4b40a" stroke="#8a7e10"/>
<path d="M1392,697v17l4,-4l3,7l3,-1l-3,-7h5z" fill="#fff" stroke="#333" stroke-width=".8"/>

<!-- left col1 -->
<path d="M50,168V987" stroke="#e4e4e4"/><path d="M54,168V987" stroke="#eee"/>
<g stroke="#aaa" stroke-dasharray="2 2"><path d="M4,170H50M58,170H104M58,808H104"/></g>
<path d="M4,451.5H50M4,925.5H50M58,785H108M58,900H104M4,981H108" stroke="#ddd"/>
<use href="#l1" x="21" y="195"/><use href="#dd" x="46" y="195"/>
<use href="#l2" x="20" y="234"/><use href="#dd" x="46" y="234"/>
<use href="#l2" x="25" y="273"/>
<use href="#l4" x="26" y="312"/><use href="#l5" x="26" y="349"/><use href="#l6" x="27" y="390"/><use href="#l7" x="27" y="428"/>
<use href="#l8" x="27" y="474"/><use href="#l9" x="23" y="512"/><use href="#dd" x="46" y="513"/><use href="#l10" x="27" y="551"/>
<use href="#l11" x="20" y="591"/><use href="#dd" x="46" y="591"/><use href="#l12" x="27" y="630"/><use href="#l13" x="27" y="668"/><use href="#l14" x="26" y="708"/>
<use href="#l15" x="24" y="746"/><use href="#dd" x="46" y="747"/><use href="#l15" x="27" y="782"/><use href="#l16" x="28" y="823"/><use href="#l17" x="27" y="863"/><use href="#l18" x="27" y="902"/><use href="#l19" x="27" y="948"/>
<use href="#tri" x="9" y="980"/><path d="M42,977l3,3l3,-3M42,981l3,3l3,-3" fill="none" stroke="#222"/>
<!-- left col2 -->
<use href="#p1" x="76" y="195"/><use href="#dd" x="100" y="195"/><use href="#p2" x="80" y="234"/><use href="#p3" x="76" y="273"/><use href="#dd" x="100" y="273"/>
<use href="#p4" x="80" y="312"/><use href="#p5" x="76" y="351"/><use href="#dd" x="100" y="351"/><use href="#p6" x="76" y="390"/><use href="#dd" x="100" y="390"/><use href="#p7" x="76" y="428"/><use href="#dd" x="100" y="428"/>
<use href="#p8" x="81" y="467"/><use href="#p9" x="80" y="506"/><use href="#p10" x="76" y="546"/><use href="#dd" x="100" y="546"/><use href="#tri" x="63" y="571"/>
<use href="#q1" x="80" y="832"/><use href="#q2" x="80" y="871"/><use href="#q3" x="80" y="908"/><use href="#q4" x="80" y="948"/><use href="#tri" x="63" y="980"/>

<!-- right col A -->
<g stroke="#aaa" stroke-dasharray="2 2"><path d="M1782,172H1816M1824,172H1866"/></g>
<path d="M1820,168V735M1873,168V988M1778,736H1820" stroke="#e4e4e4"/>
<use href="#a1" x="1799" y="195"/><use href="#a2" x="1799" y="232"/><use href="#a3" x="1798" y="273"/><use href="#a4" x="1798" y="311"/><use href="#a5" x="1797" y="350"/><use href="#a6" x="1799" y="390"/><use href="#a7" x="1798" y="428"/><use href="#a8" x="1798" y="468"/><use href="#a9" x="1799" y="506"/><use href="#a10" x="1798" y="546"/><use href="#a11" x="1798" y="583"/><use href="#a12" x="1798" y="623"/><use href="#a13" x="1798" y="663"/>
<text x="1786" y="712" font-size="27" font-weight="900" style="fill:#2030e0">名</text>
<use href="#tri" x="1787" y="728"/>
<!-- right col B -->
<use href="#b1" x="1847" y="194"/><use href="#q4" x="1845" y="232"/><use href="#b3" x="1847" y="273"/><use href="#b4" x="1847" y="311"/><use href="#b5" x="1847" y="348"/><use href="#b6" x="1847" y="390"/><use href="#b7" x="1847" y="428"/><use href="#b8" x="1847" y="467"/><use href="#b9" x="1847" y="505"/><use href="#b10" x="1847" y="545"/><use href="#b11" x="1847" y="583"/><use href="#b12" x="1847" y="623"/><use href="#b13" x="1847" y="663"/><use href="#b14" x="1847" y="702"/><use href="#b15" x="1847" y="741"/><use href="#b16" x="1841" y="780"/><use href="#dd" x="1866" y="780"/><use href="#b17" x="1841" y="820"/><use href="#dd" x="1866" y="820"/><use href="#b18" x="1847" y="858"/><use href="#b19" x="1847" y="896"/><use href="#b20" x="1847" y="935"/>
<use href="#tri" x="1829" y="980"/><path d="M1862,977l3,3l3,-3M1862,981l3,3l3,-3" fill="none" stroke="#222"/>
<!-- right strip -->
<g transform="translate(1901,181)" fill="none" stroke="#222"><circle r="4" stroke-width="1.6"/><path d="M0,-7v3M0,4v3M-7,0h3M4,0h3M-5,-5l2,2M3,3l2,2M5,-5l-2,2M-3,3l-2,2" stroke-width="1.3"/></g>
<g transform="translate(1898,234) scale(1.1)"><use href="#r1"/></g>
<g transform="translate(1898,284) scale(1.1)"><use href="#r2"/></g>
<g transform="translate(1898,334) scale(1.1)"><use href="#r3"/></g>
<g transform="translate(1898,385) scale(1.1)"><use href="#r4"/></g>
<g transform="translate(1898,448) scale(1.1)"><use href="#r5"/></g>
<g transform="translate(1898,509) scale(1.1)"><use href="#r6"/></g>
<g transform="translate(1898,570)"><use href="#r7"/></g>
<g transform="translate(1898,620) scale(1.1)"><use href="#r8"/></g>
<g transform="translate(1898,671) scale(1.1)"><use href="#r9"/></g>
<g transform="translate(1898,721) scale(1.1)"><use href="#r10"/></g>
<g transform="translate(1898,771) scale(1.1)"><use href="#r11"/></g>
<g transform="translate(1898,821) scale(1.1)"><use href="#r12"/></g>

<!-- bottom bar -->
<rect x="4.5" y="997.5" width="167" height="23" fill="#fff" stroke="#aaa"/>
<rect x="179.5" y="997.5" width="175" height="23" fill="#fff" stroke="#aaa"/>
<text x="8" y="1015" font-size="14">没有选择过滤器</text><text x="182" y="1015" font-size="14">整个装配</text>
<use href="#dd" x="160" y="1009"/><use href="#dd" x="343" y="1009"/>
<g fill="#c8d6d6"><rect x="715" y="990" width="117" height="38"/><rect x="872" y="990" width="38" height="38"/><rect x="949" y="990" width="39" height="38"/><rect x="1028" y="990" width="77" height="38"/></g>
<path d="M754,990V1028M793,990V1028M1066,990V1028" stroke="#aab8b8"/>
<path d="M400,992V1024M570,992V1024M628,992V1024M1146,992V1024" stroke="#ddd"/>
<use href="#b_wr" x="377" y="1010"/><use href="#b_fn" x="423" y="1010"/>
<rect x="444.5" y="994.5" width="29" height="31" fill="#fff" stroke="#b84040"/><use href="#b_fy" x="458" y="1010"/><use href="#dd" x="485" y="1009"/>
<use href="#b_cr" x="510" y="1010"/><use href="#b_bn" x="547" y="1010"/><use href="#b_ds" x="593" y="1010"/><use href="#dd" x="619" y="1009"/>
<use href="#b_sel" x="651" y="1010"/><use href="#b_boxb" x="688" y="1010"/>
<use href="#b_all" x="735" y="1010"/><use href="#b_ln" x="774" y="1010"/><use href="#b_lm" x="813" y="1010"/><use href="#b_cur" x="852" y="1010"/><use href="#b_ctl" x="891" y="1008"/><use href="#b_int" x="930" y="1010"/><use href="#b_cir" x="968" y="1010"/><use href="#b_q" x="1007" y="1010"/><use href="#b_pl" x="1047" y="1010"/><use href="#b_lm" x="1086" y="1010"/><use href="#b_sf" x="1125" y="1010"/><use href="#b_grd" x="1167" y="1010"/>
</svg>
</body></html>
